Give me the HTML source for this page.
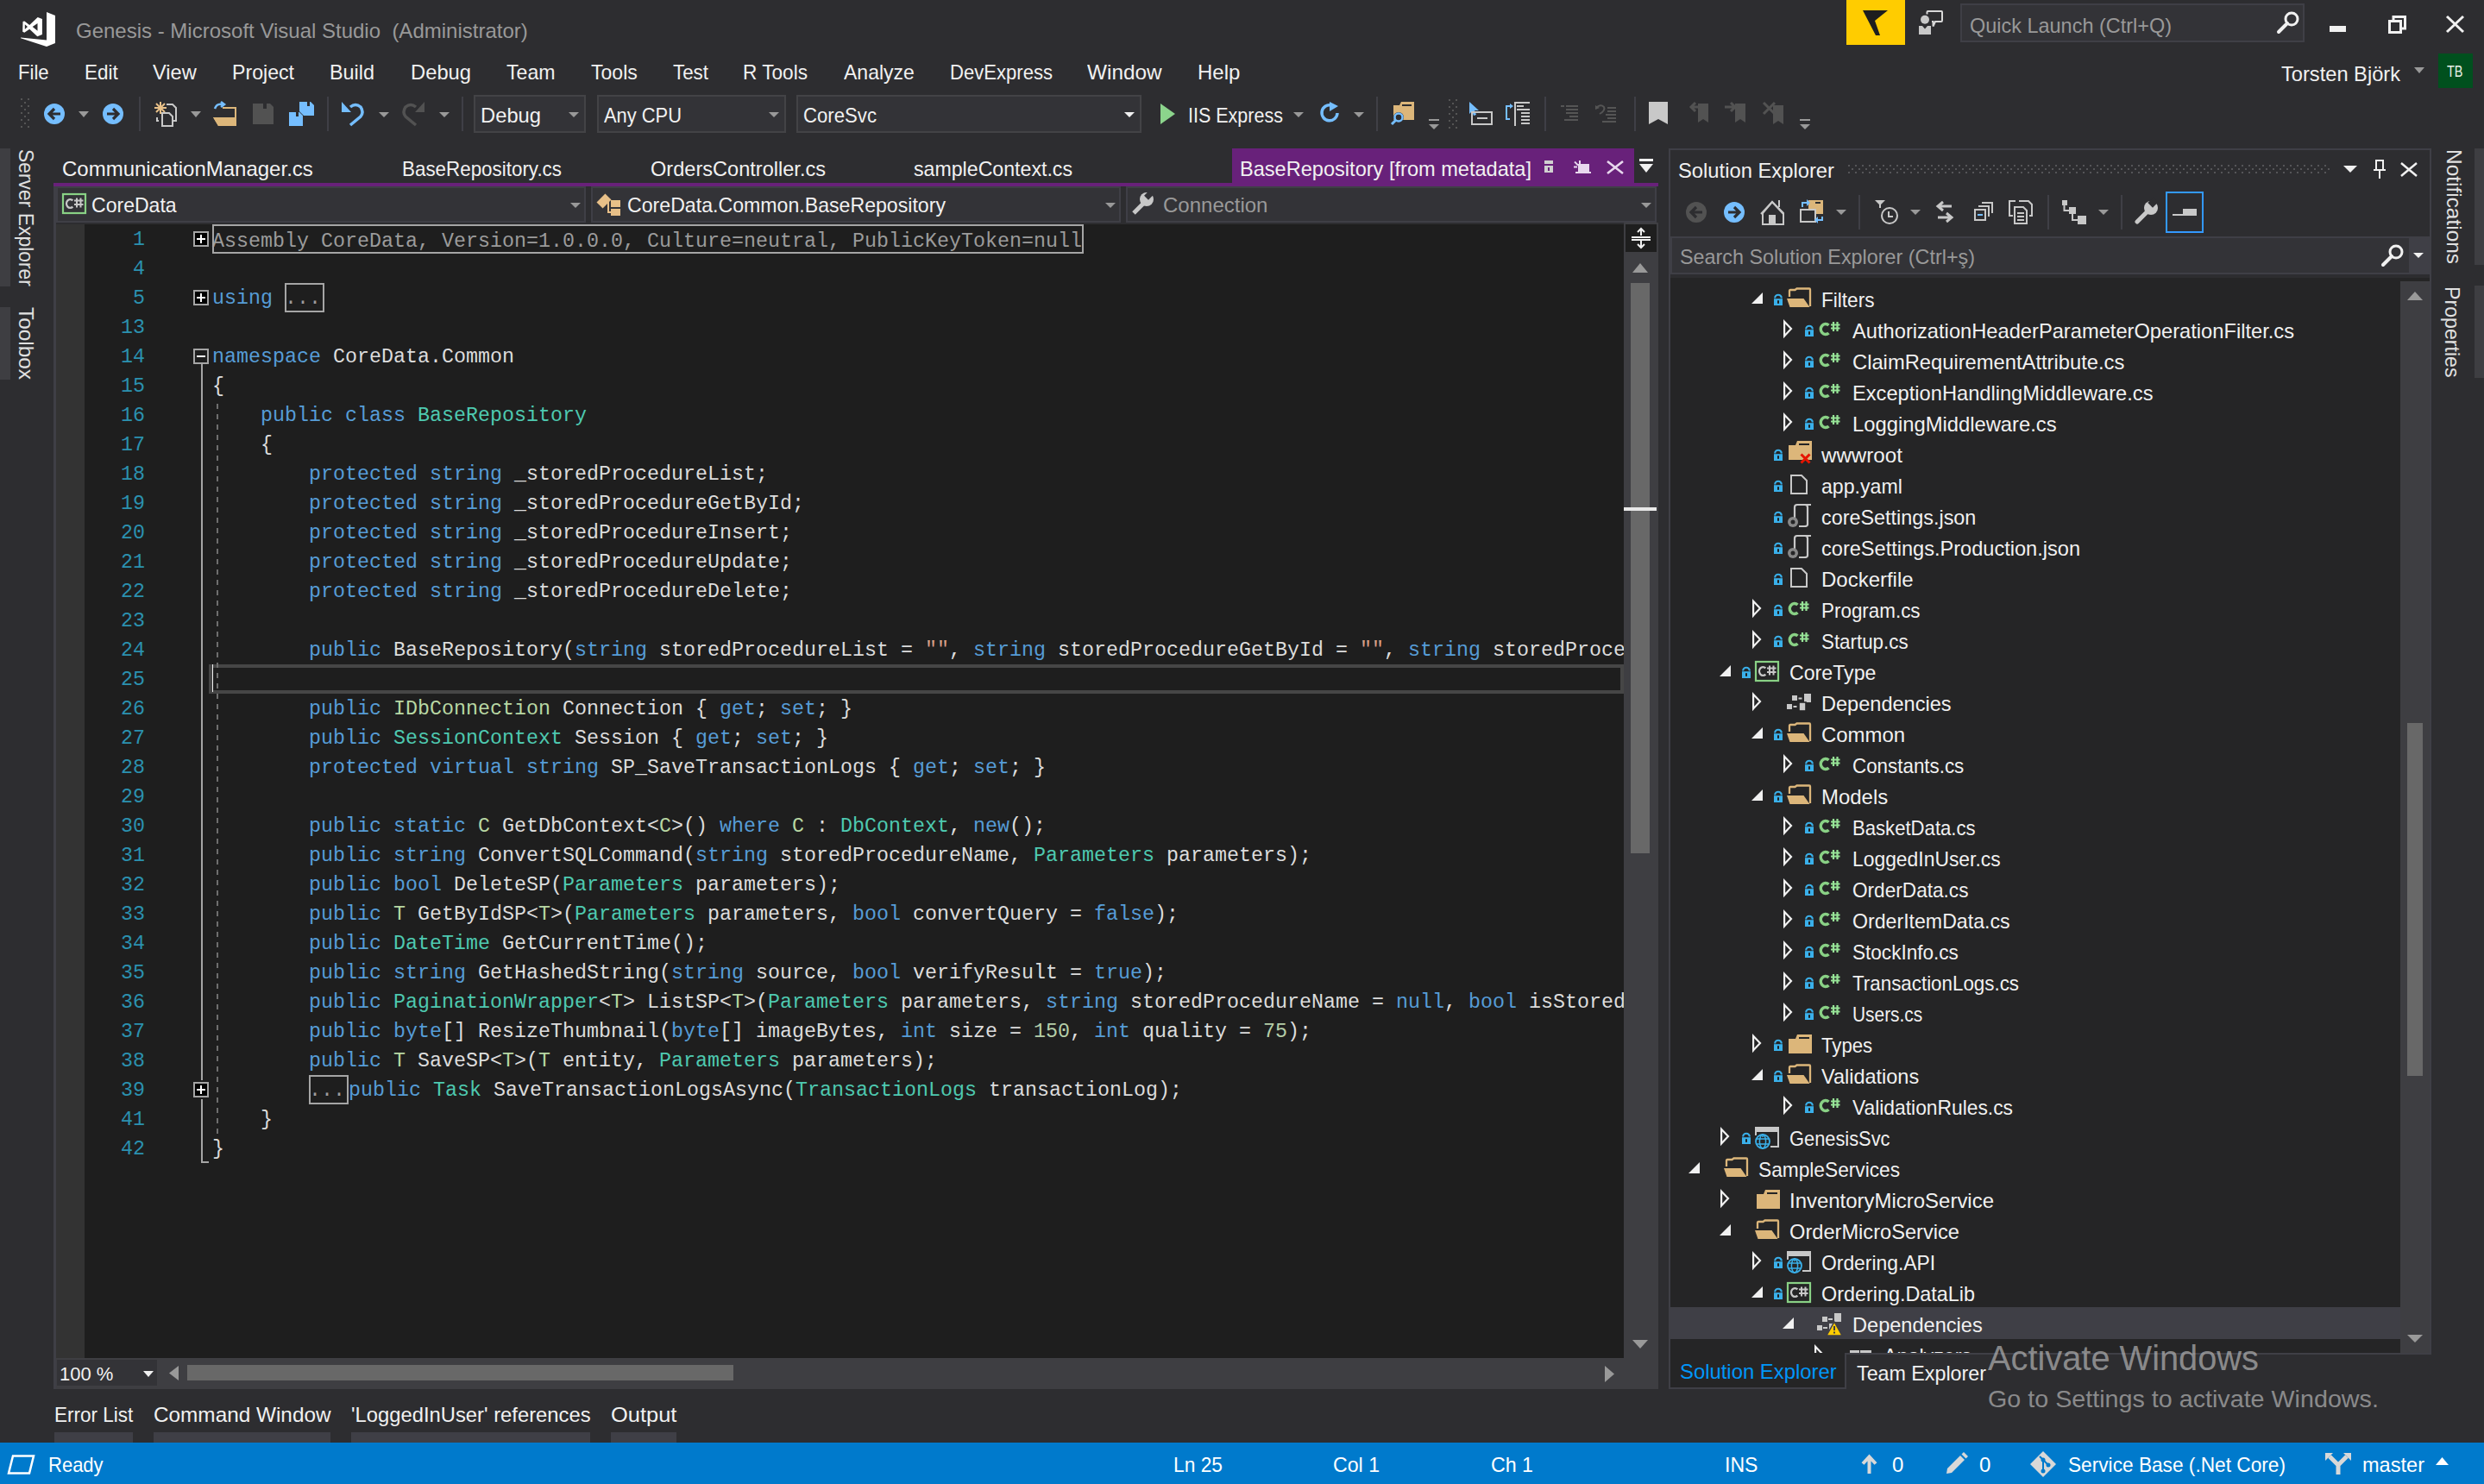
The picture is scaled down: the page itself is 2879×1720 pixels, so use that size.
<!DOCTYPE html><html><head><meta charset="utf-8"><title>VS</title><style>
*{margin:0;padding:0;box-sizing:border-box}
html,body{width:2879px;height:1720px;overflow:hidden;background:#2d2d30;font-family:"Liberation Sans",sans-serif;color:#f1f1f1;position:relative}
.a{position:absolute}
.t{position:absolute;white-space:pre;line-height:normal}
.mono{font-family:"Liberation Mono",monospace}
svg{overflow:visible}
</style></head><body>
<svg class="a" style="left:24px;top:14px" width="40" height="40" viewBox="0 0 40 40"><polygon points="30,0 40,4 40,36 30,40 0,30.3 0,29.5 30,32.4" fill="#ffffff"/><path fill-rule="evenodd" d="M2.5 11 L4.3 10.4 L10.2 15 L19.7 5.9 L24.9 8 V26.1 L19.3 28.3 L10.2 19.8 L4.3 23.8 L2.2 22.7 Z M4.8 14.2 L8 17.1 L4.8 20.1 Z M19.5 12.9 L13.7 17.1 L19.5 21.7 Z" fill="#ffffff"/></svg>
<div class="t" style="left:88px;top:22.28px;font-size:24px;color:#999999;">Genesis - Microsoft Visual Studio  (Administrator)</div>
<div class="a" style="left:2140px;top:0px;width:68px;height:52px;background:#ffcc00;"></div>
<svg class="a" style="left:2159px;top:12px" width="29" height="29" viewBox="0 0 29 29"><polygon points="0,0 29,0 14,12 20,29 15,29" fill="#1e1e1e"/></svg>
<svg class="a" style="left:2224px;top:11px" width="29" height="30" viewBox="0 0 29 30"><path d="M9.5 5.5 V3 Q9.5 2 10.5 2 H26 Q27 2 27 3 V12.5 Q27 14 26 14 H19 L16.5 19.5 V14 H15" fill="none" stroke="#d8d8d8" stroke-width="2"/><circle cx="7" cy="11.8" r="5" fill="#c8c8c8"/><polygon points="0,19 4,19 7,22.5 10,19 14,19 14,29 0,29" fill="#c8c8c8"/></svg>
<div class="a" style="left:2272px;top:4px;width:399px;height:45px;background:#333337;border:2px solid #3f3f46;"></div>
<div class="t" style="left:2283px;top:16.28px;font-size:24px;color:#999999;transform-origin:0 0;transform:scaleX(0.9774);">Quick Launch (Ctrl+Q)</div>
<svg class="a" style="left:2639px;top:13px" width="26" height="26" viewBox="0 0 26 26"><circle cx="17" cy="9" r="7" fill="none" stroke="#f1f1f1" stroke-width="3"/><line x1="12" y1="14" x2="2" y2="24" stroke="#f1f1f1" stroke-width="4" stroke-linecap="round"/></svg>
<div class="a" style="left:2700px;top:30px;width:19px;height:7px;background:#f1f1f1;"></div>
<svg class="a" style="left:2768px;top:18px" width="21" height="21" viewBox="0 0 21 21"><rect x="1.5" y="6.5" width="13" height="13" fill="none" stroke="#f1f1f1" stroke-width="3"/><path d="M6 6 V1.5 H19.5 V15 H15" fill="none" stroke="#f1f1f1" stroke-width="3"/></svg>
<svg class="a" style="left:2835px;top:19px" width="21" height="18" viewBox="0 0 21 18"><path d="M1 0 L20 18 M20 0 L1 18" stroke="#f1f1f1" stroke-width="3"/></svg>
<div class="t" style="left:21px;top:70.28px;font-size:24px;color:#f1f1f1;transform-origin:0 0;transform:scaleX(0.9209);">File</div>
<div class="t" style="left:98px;top:70.28px;font-size:24px;color:#f1f1f1;transform-origin:0 0;transform:scaleX(0.9381);">Edit</div>
<div class="t" style="left:177.4px;top:70.28px;font-size:24px;color:#f1f1f1;transform-origin:0 0;transform:scaleX(0.9830);">View</div>
<div class="t" style="left:269px;top:70.28px;font-size:24px;color:#f1f1f1;transform-origin:0 0;transform:scaleX(0.9638);">Project</div>
<div class="t" style="left:382px;top:70.28px;font-size:24px;color:#f1f1f1;transform-origin:0 0;transform:scaleX(0.9745);">Build</div>
<div class="t" style="left:476px;top:70.28px;font-size:24px;color:#f1f1f1;transform-origin:0 0;transform:scaleX(0.9901);">Debug</div>
<div class="t" style="left:587px;top:70.28px;font-size:24px;color:#f1f1f1;transform-origin:0 0;transform:scaleX(0.9627);">Team</div>
<div class="t" style="left:684.5px;top:70.28px;font-size:24px;color:#f1f1f1;transform-origin:0 0;transform:scaleX(0.9604);">Tools</div>
<div class="t" style="left:780px;top:70.28px;font-size:24px;color:#f1f1f1;transform-origin:0 0;transform:scaleX(0.9315);">Test</div>
<div class="t" style="left:861px;top:70.28px;font-size:24px;color:#f1f1f1;transform-origin:0 0;transform:scaleX(0.9425);">R Tools</div>
<div class="t" style="left:977.6px;top:70.28px;font-size:24px;color:#f1f1f1;transform-origin:0 0;transform:scaleX(0.9581);">Analyze</div>
<div class="t" style="left:1100.6px;top:70.28px;font-size:24px;color:#f1f1f1;transform-origin:0 0;transform:scaleX(0.9198);">DevExpress</div>
<div class="t" style="left:1260px;top:70.28px;font-size:24px;color:#f1f1f1;transform-origin:0 0;transform:scaleX(1.0159);">Window</div>
<div class="t" style="left:1387.6px;top:70.28px;font-size:24px;color:#f1f1f1;transform-origin:0 0;transform:scaleX(0.9991);">Help</div>
<div class="t" style="left:2644px;top:72.28px;font-size:24px;color:#f1f1f1;transform-origin:0 0;transform:scaleX(0.9853);">Torsten Björk</div>
<svg class="a" style="left:2798px;top:78px" width="12" height="7" viewBox="0 0 12 7"><polygon points="0,0 12,0 6.0,7" fill="#999999"/></svg>
<div class="a" style="left:2826px;top:62px;width:40px;height:40px;background:#00501e;"></div>
<div class="t" style="left:2836px;top:73.16px;font-size:17.5px;color:#e8f0e8;transform-origin:0 0;transform:scaleX(0.8274);">TB</div>
<svg class="a" style="left:24px;top:114px" width="10" height="34" viewBox="0 0 10 34"><rect x="0" y="0" width="2" height="2" fill="#555"/><rect x="8" y="0" width="2" height="2" fill="#555"/><rect x="4" y="4" width="2" height="2" fill="#555"/><rect x="0" y="8" width="2" height="2" fill="#555"/><rect x="8" y="8" width="2" height="2" fill="#555"/><rect x="4" y="12" width="2" height="2" fill="#555"/><rect x="0" y="16" width="2" height="2" fill="#555"/><rect x="8" y="16" width="2" height="2" fill="#555"/><rect x="4" y="20" width="2" height="2" fill="#555"/><rect x="0" y="24" width="2" height="2" fill="#555"/><rect x="8" y="24" width="2" height="2" fill="#555"/><rect x="4" y="28" width="2" height="2" fill="#555"/><rect x="0" y="32" width="2" height="2" fill="#555"/><rect x="8" y="32" width="2" height="2" fill="#555"/></svg>
<svg class="a" style="left:51px;top:120px" width="24" height="24" viewBox="0 0 24 24"><circle cx="12" cy="12" r="12" fill="#75beff"/><path d="M19 12 H7 M12 6 L6 12 L12 18" fill="none" stroke="#2d2d30" stroke-width="3.2"/></svg>
<svg class="a" style="left:91px;top:129px" width="12" height="7" viewBox="0 0 12 7"><polygon points="0,0 12,0 6.0,7" fill="#999999"/></svg>
<svg class="a" style="left:119px;top:120px" width="24" height="24" viewBox="0 0 24 24"><circle cx="12" cy="12" r="12" fill="#75beff"/><path d="M5 12 H17 M12 6 L18 12 L12 18" fill="none" stroke="#2d2d30" stroke-width="3.2"/></svg>
<div class="a" style="left:161px;top:112px;width:2px;height:40px;background:#3f3f46;"></div>
<svg class="a" style="left:179px;top:118px" width="27" height="28" viewBox="0 0 27 28"><g stroke="#e8c088" stroke-width="2"><path d="M7 0 V14 M0 7 H14 M2 2 L12 12 M12 2 L2 12"/></g><path d="M14 3 H21 L25 7 V22 H21" fill="none" stroke="#c8c8c8" stroke-width="2"/><path d="M3 18 V22 H5" fill="none" stroke="#c8c8c8" stroke-width="2"/><path d="M9 13 H17 L21 17 V28 H9 Z" fill="#2d2d30" stroke="#c8c8c8" stroke-width="2"/></svg>
<svg class="a" style="left:221px;top:129px" width="12" height="7" viewBox="0 0 12 7"><polygon points="0,0 12,0 6.0,7" fill="#999999"/></svg>
<svg class="a" style="left:247px;top:118px" width="29" height="28" viewBox="0 0 29 28"><path d="M2 8 Q4 2 10 3 L12 3" fill="none" stroke="#75beff" stroke-width="2.5"/><path d="M9 0 L13 3 L9 6" fill="none" stroke="#75beff" stroke-width="2.5"/><path d="M11 6 H27 V28 H6 L0 18 H11 Z" fill="#dcb67a"/><path d="M13 7 H26 V20" fill="none" stroke="#dcb67a" stroke-width="2"/><rect x="10" y="8" width="15" height="10" fill="#2d2d30"/><path d="M0 18 H22 L27 28 H6 Z" fill="#dcb67a"/></svg>
<svg class="a" style="left:293px;top:120px" width="24" height="24" viewBox="0 0 24 24"><path d="M0 0 H20 L24 4 V24 H0 Z" fill="#525252"/><rect x="12" y="0" width="4" height="6" fill="#2d2d30"/></svg>
<svg class="a" style="left:335px;top:118px" width="29" height="28" viewBox="0 0 29 28"><path d="M12 0 H25 L29 4 V16 H17 L12 11 Z" fill="#75beff"/><rect x="21" y="0" width="3" height="5" fill="#2d2d30"/><path d="M0 12 H12 L16 16 V28 H0 Z" fill="#75beff"/><rect x="8" y="12" width="3" height="5" fill="#2d2d30"/></svg>
<div class="a" style="left:379px;top:112px;width:2px;height:40px;background:#3f3f46;"></div>
<svg class="a" style="left:396px;top:118px" width="26" height="28" viewBox="0 0 26 28"><path d="M10 6 Q16 1 22 6 Q26 12 22 17 L10 27" fill="none" stroke="#75beff" stroke-width="3.5"/><polygon points="0,0 0,12 11,12" fill="#75beff"/></svg>
<svg class="a" style="left:439px;top:130px" width="12" height="6" viewBox="0 0 12 6"><polygon points="0,0 12,0 6.0,6" fill="#999999"/></svg>
<svg class="a" style="left:466px;top:118px" width="26" height="28" viewBox="0 0 26 28"><path d="M16 6 Q10 1 4 6 Q0 12 4 17 L16 27" fill="none" stroke="#525252" stroke-width="3.5"/><polygon points="26,0 26,12 15,12" fill="#525252"/></svg>
<svg class="a" style="left:509px;top:130px" width="12" height="6" viewBox="0 0 12 6"><polygon points="0,0 12,0 6.0,6" fill="#999999"/></svg>
<div class="a" style="left:535px;top:112px;width:2px;height:40px;background:#3f3f46;"></div>
<div class="a" style="left:549px;top:110px;width:130px;height:44px;background:#333337;border:2px solid #434346;"></div>
<div class="t" style="left:557px;top:120.28px;font-size:24px;color:#f1f1f1;transform-origin:0 0;transform:scaleX(0.9901);">Debug</div>
<svg class="a" style="left:659px;top:130px" width="12" height="6" viewBox="0 0 12 6"><polygon points="0,0 12,0 6.0,6" fill="#999999"/></svg>
<div class="a" style="left:692px;top:110px;width:219px;height:44px;background:#333337;border:2px solid #434346;"></div>
<div class="t" style="left:700px;top:120.28px;font-size:24px;color:#f1f1f1;transform-origin:0 0;transform:scaleX(0.9118);">Any CPU</div>
<svg class="a" style="left:891px;top:130px" width="12" height="6" viewBox="0 0 12 6"><polygon points="0,0 12,0 6.0,6" fill="#999999"/></svg>
<div class="a" style="left:923px;top:110px;width:400px;height:44px;background:#333337;border:2px solid #434346;"></div>
<div class="t" style="left:931px;top:120.28px;font-size:24px;color:#f1f1f1;transform-origin:0 0;transform:scaleX(0.9236);">CoreSvc</div>
<svg class="a" style="left:1303px;top:130px" width="12" height="6" viewBox="0 0 12 6"><polygon points="0,0 12,0 6.0,6" fill="#f1f1f1"/></svg>
<svg class="a" style="left:1344.5px;top:120px" width="18" height="24" viewBox="0 0 18 24"><polygon points="0,0 17,12 0,24" fill="#8cd48c"/></svg>
<div class="t" style="left:1377px;top:120.28px;font-size:24px;color:#f1f1f1;transform-origin:0 0;transform:scaleX(0.8962);">IIS Express</div>
<svg class="a" style="left:1499px;top:130px" width="12" height="6" viewBox="0 0 12 6"><polygon points="0,0 12,0 6.0,6" fill="#999999"/></svg>
<svg class="a" style="left:1529px;top:118px" width="26" height="27" viewBox="0 0 26 27"><path d="M21 13 A9 9 0 1 1 14 4" fill="none" stroke="#75beff" stroke-width="3.5"/><polygon points="12,0 22,5 12,11" fill="#75beff"/></svg>
<svg class="a" style="left:1569px;top:130px" width="12" height="6" viewBox="0 0 12 6"><polygon points="0,0 12,0 6.0,6" fill="#999999"/></svg>
<div class="a" style="left:1595px;top:112px;width:2px;height:40px;background:#3f3f46;"></div>
<svg class="a" style="left:1612px;top:117px" width="28" height="28" viewBox="0 0 28 28"><path d="M3 5 H10 L12 1 H27 V22 H3 Z" fill="#dcb67a"/><rect x="13" y="4" width="11" height="2" fill="#2d2d30"/><circle cx="9" cy="19" r="6" fill="#2d2d30"/><circle cx="9" cy="19" r="4.5" fill="none" stroke="#75beff" stroke-width="2.5"/><line x1="5.5" y1="22.5" x2="1" y2="27" stroke="#75beff" stroke-width="3"/></svg>
<div class="a" style="left:1656px;top:138px;width:12px;height:2px;background:#999999;"></div>
<svg class="a" style="left:1656px;top:144px" width="12" height="6" viewBox="0 0 12 6"><polygon points="0,0 12,0 6.0,6" fill="#999999"/></svg>
<svg class="a" style="left:1679px;top:115px" width="10" height="32" viewBox="0 0 10 32"><rect x="0" y="0" width="2" height="2" fill="#555"/><rect x="8" y="0" width="2" height="2" fill="#555"/><rect x="4" y="4" width="2" height="2" fill="#555"/><rect x="0" y="8" width="2" height="2" fill="#555"/><rect x="8" y="8" width="2" height="2" fill="#555"/><rect x="4" y="12" width="2" height="2" fill="#555"/><rect x="0" y="16" width="2" height="2" fill="#555"/><rect x="8" y="16" width="2" height="2" fill="#555"/><rect x="4" y="20" width="2" height="2" fill="#555"/><rect x="0" y="24" width="2" height="2" fill="#555"/><rect x="8" y="24" width="2" height="2" fill="#555"/><rect x="4" y="28" width="2" height="2" fill="#555"/><rect x="0" y="32" width="2" height="2" fill="#555"/><rect x="8" y="32" width="2" height="2" fill="#555"/></svg>
<svg class="a" style="left:1703px;top:118px" width="27" height="27" viewBox="0 0 27 27"><polygon points="0,0 11,10 6,10 8,15 5,16 3,11 0,14" fill="#75beff"/><rect x="3" y="12" width="23" height="14" fill="none" stroke="#c8c8c8" stroke-width="2"/><rect x="9" y="18" width="12" height="2" fill="#c8c8c8"/></svg>
<svg class="a" style="left:1745px;top:118px" width="28" height="28" viewBox="0 0 28 28"><path d="M5 5 H1 V20 H5" fill="none" stroke="#75beff" stroke-width="2"/><polygon points="5,2 9,5 5,8" fill="#75beff"/><rect x="10" y="0" width="2" height="28" fill="#c8c8c8"/><rect x="10" y="0" width="18" height="2" fill="#c8c8c8"/><rect x="13" y="4" width="8" height="2" fill="#c8c8c8"/><rect x="13" y="8" width="15" height="2" fill="#c8c8c8"/><rect x="18" y="12" width="10" height="2" fill="#c8c8c8"/><rect x="18" y="16" width="10" height="2" fill="#c8c8c8"/><rect x="18" y="20" width="10" height="2" fill="#c8c8c8"/><rect x="18" y="24" width="10" height="2" fill="#c8c8c8"/></svg>
<div class="a" style="left:1790px;top:112px;width:2px;height:40px;background:#3f3f46;"></div>
<svg class="a" style="left:1809px;top:122px" width="20" height="18" viewBox="0 0 20 18"><rect x="0" y="0" width="4" height="2" fill="#555"/><rect x="6" y="0" width="14" height="2" fill="#555"/><rect x="6" y="4" width="14" height="2" fill="#555"/><rect x="6" y="8" width="14" height="2" fill="#555"/><rect x="10" y="12" width="10" height="2" fill="#555"/><rect x="4" y="16" width="16" height="2" fill="#555"/></svg>
<svg class="a" style="left:1849px;top:120px" width="24" height="22" viewBox="0 0 24 22"><path d="M1 5 Q6 0 10 4 Q12 8 5 12" fill="none" stroke="#555" stroke-width="2"/><polygon points="0,2 5,5 0,7" fill="#555"/><rect x="14" y="4" width="10" height="2" fill="#555"/><rect x="14" y="8" width="10" height="2" fill="#555"/><rect x="12" y="12" width="12" height="2" fill="#555"/><rect x="14" y="16" width="10" height="2" fill="#555"/><rect x="8" y="20" width="16" height="2" fill="#555"/></svg>
<div class="a" style="left:1894px;top:112px;width:2px;height:40px;background:#3f3f46;"></div>
<svg class="a" style="left:1911px;top:118px" width="22" height="26" viewBox="0 0 22 26"><polygon points="0,0 22,0 22,26 11,20 0,26" fill="#c8c8c8"/></svg>
<svg class="a" style="left:1957px;top:118px" width="23" height="24" viewBox="0 0 23 24"><polygon points="11,2 23,2 23,24 17,20 11,24" fill="#525252"/><path d="M14 6 H3 M8 1 L3 6 L8 11" fill="none" stroke="#525252" stroke-width="3"/></svg>
<svg class="a" style="left:1999px;top:118px" width="24" height="24" viewBox="0 0 24 24"><polygon points="12,2 24,2 24,24 18,20 12,24" fill="#525252"/><path d="M0 6 H12 M7 1 L12 6 L7 11" fill="none" stroke="#525252" stroke-width="3"/></svg>
<svg class="a" style="left:2043px;top:118px" width="24" height="26" viewBox="0 0 24 26"><polygon points="12,4 24,4 24,26 18,22 12,26" fill="#525252"/><path d="M1 14 L14 1 M1 1 L14 14" fill="none" stroke="#525252" stroke-width="3"/></svg>
<div class="a" style="left:2086px;top:138px;width:12px;height:2px;background:#999999;"></div>
<svg class="a" style="left:2086px;top:144px" width="12" height="6" viewBox="0 0 12 6"><polygon points="0,0 12,0 6.0,6" fill="#999999"/></svg>
<div class="a" style="left:0px;top:172px;width:12px;height:160px;background:#3e3e42;"></div>
<div class="a" style="left:0px;top:356px;width:12px;height:84px;background:#3e3e42;"></div>
<div class="t" style="left:30px;top:173px;font-size:24px;color:#e0e0e0;transform-origin:0 0;transform:rotate(90deg) translate(0,-50%) scaleX(0.9535);line-height:28px">Server Explorer</div>
<div class="t" style="left:30px;top:356px;font-size:24px;color:#e0e0e0;transform-origin:0 0;transform:rotate(90deg) translate(0,-50%) scaleX(1.0157);line-height:28px">Toolbox</div>
<div class="t" style="left:72px;top:182.28px;font-size:24px;color:#f1f1f1;">CommunicationManager.cs</div>
<div class="t" style="left:466px;top:182.28px;font-size:24px;color:#f1f1f1;transform-origin:0 0;transform:scaleX(0.9329);">BaseRepository.cs</div>
<div class="t" style="left:754px;top:182.28px;font-size:24px;color:#f1f1f1;transform-origin:0 0;transform:scaleX(0.9819);">OrdersController.cs</div>
<div class="t" style="left:1059px;top:182.28px;font-size:24px;color:#f1f1f1;transform-origin:0 0;transform:scaleX(0.9647);">sampleContext.cs</div>
<div class="a" style="left:1428px;top:172px;width:466px;height:44px;background:#68217a;"></div>
<div class="t" style="left:1437px;top:182.28px;font-size:24px;color:#f1f1f1;transform-origin:0 0;transform:scaleX(0.9821);">BaseRepository [from metadata]</div>
<svg class="a" style="left:1790px;top:186px" width="10" height="14" viewBox="0 0 10 14"><rect x="0" y="0" width="10" height="4" fill="#d0d0d0"/><rect x="0" y="6" width="10" height="8" fill="#d0d0d0"/><rect x="4" y="8" width="2" height="4" fill="#68217a"/></svg>
<svg class="a" style="left:1824px;top:186px" width="20" height="15" viewBox="0 0 20 15"><path d="M1 1.5 L5 5.5" stroke="#e8d8ee" stroke-width="1.8"/><rect x="6" y="0" width="2" height="4" fill="#e8d8ee"/><rect x="0" y="6.5" width="4" height="2" fill="#e8d8ee"/><polygon points="5,4 18,4 18,13 5,13" fill="#e8d8ee"/><rect x="2" y="13" width="18" height="2" fill="#e8d8ee"/></svg>
<svg class="a" style="left:1862px;top:186px" width="20" height="16" viewBox="0 0 20 16"><path d="M1 1 L19 15 M19 1 L1 15" stroke="#e8d8ee" stroke-width="2.6"/></svg>
<svg class="a" style="left:1900px;top:184px" width="16" height="16" viewBox="0 0 16 16"><rect x="0" y="0" width="16" height="3" fill="#f1f1f1"/><polygon points="0,6 16,6 8,16" fill="#f1f1f1"/></svg>
<div class="a" style="left:62px;top:212px;width:1860px;height:4px;background:#68217a;"></div>
<div class="a" style="left:65px;top:216px;width:614px;height:42px;background:#333337;border:2px solid #3f3f46;"></div>
<svg class="a" style="left:661px;top:235px" width="12" height="6" viewBox="0 0 12 6"><polygon points="0,0 12,0 6.0,6" fill="#999999"/></svg>
<div class="a" style="left:685px;top:216px;width:614px;height:42px;background:#333337;border:2px solid #3f3f46;"></div>
<svg class="a" style="left:1281px;top:235px" width="12" height="6" viewBox="0 0 12 6"><polygon points="0,0 12,0 6.0,6" fill="#999999"/></svg>
<div class="a" style="left:1305px;top:216px;width:615px;height:42px;background:#333337;border:2px solid #3f3f46;"></div>
<svg class="a" style="left:1902px;top:235px" width="12" height="6" viewBox="0 0 12 6"><polygon points="0,0 12,0 6.0,6" fill="#999999"/></svg>
<svg class="a" style="left:72px;top:224px" width="28" height="24" viewBox="0 0 28 24"><rect x="1" y="1" width="26" height="22" fill="none" stroke="#89d185" stroke-width="2.2"/><path d="M12.3 8.4 A4.3 4.9 0 1 0 12.3 15.6" fill="none" stroke="#c8c8c8" stroke-width="2.4"/><path d="M17 5.5 V16.5 M21.5 5.5 V16.5 M14 8.5 H24.5 M14 13 H24.5" stroke="#c8c8c8" stroke-width="2"/></svg>
<div class="t" style="left:106px;top:224.28px;font-size:24px;color:#f1f1f1;transform-origin:0 0;transform:scaleX(0.9600);">CoreData</div>
<svg class="a" style="left:693px;top:222px" width="28" height="28" viewBox="0 0 28 28"><g fill="#e8c088"><rect x="0" y="6" width="14" height="10" transform="rotate(-45 7 11)"/><rect x="15" y="10" width="11" height="8"/><rect x="15" y="20" width="11" height="8"/></g><path d="M12 11 V24 H17" fill="none" stroke="#e8c088" stroke-width="2"/></svg>
<div class="t" style="left:727px;top:224.28px;font-size:24px;color:#f1f1f1;transform-origin:0 0;transform:scaleX(0.9639);">CoreData.Common.BaseRepository</div>
<svg class="a" style="left:1311px;top:222px" width="28" height="28" viewBox="0 0 28 28"><path d="M3 25 L14 14" stroke="#c8c8c8" stroke-width="5"/><circle cx="18" cy="9" r="8" fill="#c8c8c8"/><rect x="17" y="0" width="7" height="8" fill="#333337" transform="rotate(45 20 4)"/></svg>
<div class="t" style="left:1348px;top:224.28px;font-size:24px;color:#999999;">Connection</div>
<div class="a" style="left:62px;top:216px;width:3px;height:1394px;background:#3f3f46;"></div>
<div class="a" style="left:65px;top:260px;width:33px;height:1314px;background:#333333;"></div>
<div class="a" style="left:98px;top:260px;width:1784px;height:1314px;background:#1e1e1e;"></div>
<div class="a" style="left:98px;top:258px;width:1784px;height:1316px;overflow:hidden">
<div class="t mono" style="left:0px;width:70px;text-align:right;top:3px;font-size:23.33px;line-height:34px;color:#2b91af">1</div>
<div class="t mono" style="left:0px;width:70px;text-align:right;top:37px;font-size:23.33px;line-height:34px;color:#2b91af">4</div>
<div class="t mono" style="left:148px;top:37px;font-size:23.33px;line-height:34px;color:#dcdcdc"></div>
<div class="t mono" style="left:0px;width:70px;text-align:right;top:71px;font-size:23.33px;line-height:34px;color:#2b91af">5</div>
<div class="t mono" style="left:0px;width:70px;text-align:right;top:105px;font-size:23.33px;line-height:34px;color:#2b91af">13</div>
<div class="t mono" style="left:148px;top:105px;font-size:23.33px;line-height:34px;color:#dcdcdc"></div>
<div class="t mono" style="left:0px;width:70px;text-align:right;top:139px;font-size:23.33px;line-height:34px;color:#2b91af">14</div>
<div class="t mono" style="left:148px;top:139px;font-size:23.33px;line-height:34px;color:#dcdcdc"><span style="color:#569cd6">namespace</span> CoreData.Common</div>
<div class="t mono" style="left:0px;width:70px;text-align:right;top:173px;font-size:23.33px;line-height:34px;color:#2b91af">15</div>
<div class="t mono" style="left:148px;top:173px;font-size:23.33px;line-height:34px;color:#dcdcdc">{</div>
<div class="t mono" style="left:0px;width:70px;text-align:right;top:207px;font-size:23.33px;line-height:34px;color:#2b91af">16</div>
<div class="t mono" style="left:148px;top:207px;font-size:23.33px;line-height:34px;color:#dcdcdc">    <span style="color:#569cd6">public</span> <span style="color:#569cd6">class</span> <span style="color:#4ec9b0">BaseRepository</span></div>
<div class="t mono" style="left:0px;width:70px;text-align:right;top:241px;font-size:23.33px;line-height:34px;color:#2b91af">17</div>
<div class="t mono" style="left:148px;top:241px;font-size:23.33px;line-height:34px;color:#dcdcdc">    {</div>
<div class="t mono" style="left:0px;width:70px;text-align:right;top:275px;font-size:23.33px;line-height:34px;color:#2b91af">18</div>
<div class="t mono" style="left:148px;top:275px;font-size:23.33px;line-height:34px;color:#dcdcdc">        <span style="color:#569cd6">protected</span> <span style="color:#569cd6">string</span> _storedProcedureList;</div>
<div class="t mono" style="left:0px;width:70px;text-align:right;top:309px;font-size:23.33px;line-height:34px;color:#2b91af">19</div>
<div class="t mono" style="left:148px;top:309px;font-size:23.33px;line-height:34px;color:#dcdcdc">        <span style="color:#569cd6">protected</span> <span style="color:#569cd6">string</span> _storedProcedureGetById;</div>
<div class="t mono" style="left:0px;width:70px;text-align:right;top:343px;font-size:23.33px;line-height:34px;color:#2b91af">20</div>
<div class="t mono" style="left:148px;top:343px;font-size:23.33px;line-height:34px;color:#dcdcdc">        <span style="color:#569cd6">protected</span> <span style="color:#569cd6">string</span> _storedProcedureInsert;</div>
<div class="t mono" style="left:0px;width:70px;text-align:right;top:377px;font-size:23.33px;line-height:34px;color:#2b91af">21</div>
<div class="t mono" style="left:148px;top:377px;font-size:23.33px;line-height:34px;color:#dcdcdc">        <span style="color:#569cd6">protected</span> <span style="color:#569cd6">string</span> _storedProcedureUpdate;</div>
<div class="t mono" style="left:0px;width:70px;text-align:right;top:411px;font-size:23.33px;line-height:34px;color:#2b91af">22</div>
<div class="t mono" style="left:148px;top:411px;font-size:23.33px;line-height:34px;color:#dcdcdc">        <span style="color:#569cd6">protected</span> <span style="color:#569cd6">string</span> _storedProcedureDelete;</div>
<div class="t mono" style="left:0px;width:70px;text-align:right;top:445px;font-size:23.33px;line-height:34px;color:#2b91af">23</div>
<div class="t mono" style="left:148px;top:445px;font-size:23.33px;line-height:34px;color:#dcdcdc"></div>
<div class="t mono" style="left:0px;width:70px;text-align:right;top:479px;font-size:23.33px;line-height:34px;color:#2b91af">24</div>
<div class="t mono" style="left:148px;top:479px;font-size:23.33px;line-height:34px;color:#dcdcdc">        <span style="color:#569cd6">public</span> <span style="color:#dcdcdc">BaseRepository</span>(<span style="color:#569cd6">string</span> storedProcedureList = <span style="color:#d69d85">""</span>, <span style="color:#569cd6">string</span> storedProcedureGetById = <span style="color:#d69d85">""</span>, <span style="color:#569cd6">string</span> storedProcedureInsert</div>
<div class="t mono" style="left:0px;width:70px;text-align:right;top:513px;font-size:23.33px;line-height:34px;color:#2b91af">25</div>
<div class="t mono" style="left:148px;top:513px;font-size:23.33px;line-height:34px;color:#dcdcdc"></div>
<div class="t mono" style="left:0px;width:70px;text-align:right;top:547px;font-size:23.33px;line-height:34px;color:#2b91af">26</div>
<div class="t mono" style="left:148px;top:547px;font-size:23.33px;line-height:34px;color:#dcdcdc">        <span style="color:#569cd6">public</span> <span style="color:#b8d7a3">IDbConnection</span> Connection { <span style="color:#569cd6">get</span>; <span style="color:#569cd6">set</span>; }</div>
<div class="t mono" style="left:0px;width:70px;text-align:right;top:581px;font-size:23.33px;line-height:34px;color:#2b91af">27</div>
<div class="t mono" style="left:148px;top:581px;font-size:23.33px;line-height:34px;color:#dcdcdc">        <span style="color:#569cd6">public</span> <span style="color:#4ec9b0">SessionContext</span> Session { <span style="color:#569cd6">get</span>; <span style="color:#569cd6">set</span>; }</div>
<div class="t mono" style="left:0px;width:70px;text-align:right;top:615px;font-size:23.33px;line-height:34px;color:#2b91af">28</div>
<div class="t mono" style="left:148px;top:615px;font-size:23.33px;line-height:34px;color:#dcdcdc">        <span style="color:#569cd6">protected</span> <span style="color:#569cd6">virtual</span> <span style="color:#569cd6">string</span> SP_SaveTransactionLogs { <span style="color:#569cd6">get</span>; <span style="color:#569cd6">set</span>; }</div>
<div class="t mono" style="left:0px;width:70px;text-align:right;top:649px;font-size:23.33px;line-height:34px;color:#2b91af">29</div>
<div class="t mono" style="left:148px;top:649px;font-size:23.33px;line-height:34px;color:#dcdcdc"></div>
<div class="t mono" style="left:0px;width:70px;text-align:right;top:683px;font-size:23.33px;line-height:34px;color:#2b91af">30</div>
<div class="t mono" style="left:148px;top:683px;font-size:23.33px;line-height:34px;color:#dcdcdc">        <span style="color:#569cd6">public</span> <span style="color:#569cd6">static</span> <span style="color:#b8d7a3">C</span> GetDbContext&lt;<span style="color:#b8d7a3">C</span>&gt;() <span style="color:#569cd6">where</span> <span style="color:#b8d7a3">C</span> : <span style="color:#4ec9b0">DbContext</span>, <span style="color:#569cd6">new</span>();</div>
<div class="t mono" style="left:0px;width:70px;text-align:right;top:717px;font-size:23.33px;line-height:34px;color:#2b91af">31</div>
<div class="t mono" style="left:148px;top:717px;font-size:23.33px;line-height:34px;color:#dcdcdc">        <span style="color:#569cd6">public</span> <span style="color:#569cd6">string</span> ConvertSQLCommand(<span style="color:#569cd6">string</span> storedProcedureName, <span style="color:#4ec9b0">Parameters</span> parameters);</div>
<div class="t mono" style="left:0px;width:70px;text-align:right;top:751px;font-size:23.33px;line-height:34px;color:#2b91af">32</div>
<div class="t mono" style="left:148px;top:751px;font-size:23.33px;line-height:34px;color:#dcdcdc">        <span style="color:#569cd6">public</span> <span style="color:#569cd6">bool</span> DeleteSP(<span style="color:#4ec9b0">Parameters</span> parameters);</div>
<div class="t mono" style="left:0px;width:70px;text-align:right;top:785px;font-size:23.33px;line-height:34px;color:#2b91af">33</div>
<div class="t mono" style="left:148px;top:785px;font-size:23.33px;line-height:34px;color:#dcdcdc">        <span style="color:#569cd6">public</span> <span style="color:#b8d7a3">T</span> GetByIdSP&lt;<span style="color:#b8d7a3">T</span>&gt;(<span style="color:#4ec9b0">Parameters</span> parameters, <span style="color:#569cd6">bool</span> convertQuery = <span style="color:#569cd6">false</span>);</div>
<div class="t mono" style="left:0px;width:70px;text-align:right;top:819px;font-size:23.33px;line-height:34px;color:#2b91af">34</div>
<div class="t mono" style="left:148px;top:819px;font-size:23.33px;line-height:34px;color:#dcdcdc">        <span style="color:#569cd6">public</span> <span style="color:#4ec9b0">DateTime</span> GetCurrentTime();</div>
<div class="t mono" style="left:0px;width:70px;text-align:right;top:853px;font-size:23.33px;line-height:34px;color:#2b91af">35</div>
<div class="t mono" style="left:148px;top:853px;font-size:23.33px;line-height:34px;color:#dcdcdc">        <span style="color:#569cd6">public</span> <span style="color:#569cd6">string</span> GetHashedString(<span style="color:#569cd6">string</span> source, <span style="color:#569cd6">bool</span> verifyResult = <span style="color:#569cd6">true</span>);</div>
<div class="t mono" style="left:0px;width:70px;text-align:right;top:887px;font-size:23.33px;line-height:34px;color:#2b91af">36</div>
<div class="t mono" style="left:148px;top:887px;font-size:23.33px;line-height:34px;color:#dcdcdc">        <span style="color:#569cd6">public</span> <span style="color:#4ec9b0">PaginationWrapper</span>&lt;<span style="color:#b8d7a3">T</span>&gt; ListSP&lt;<span style="color:#b8d7a3">T</span>&gt;(<span style="color:#4ec9b0">Parameters</span> parameters, <span style="color:#569cd6">string</span> storedProcedureName = <span style="color:#569cd6">null</span>, <span style="color:#569cd6">bool</span> isStoredProcedure</div>
<div class="t mono" style="left:0px;width:70px;text-align:right;top:921px;font-size:23.33px;line-height:34px;color:#2b91af">37</div>
<div class="t mono" style="left:148px;top:921px;font-size:23.33px;line-height:34px;color:#dcdcdc">        <span style="color:#569cd6">public</span> <span style="color:#569cd6">byte</span>[] ResizeThumbnail(<span style="color:#569cd6">byte</span>[] imageBytes, <span style="color:#569cd6">int</span> size = <span style="color:#b5cea8">150</span>, <span style="color:#569cd6">int</span> quality = <span style="color:#b5cea8">75</span>);</div>
<div class="t mono" style="left:0px;width:70px;text-align:right;top:955px;font-size:23.33px;line-height:34px;color:#2b91af">38</div>
<div class="t mono" style="left:148px;top:955px;font-size:23.33px;line-height:34px;color:#dcdcdc">        <span style="color:#569cd6">public</span> <span style="color:#b8d7a3">T</span> SaveSP&lt;<span style="color:#b8d7a3">T</span>&gt;(<span style="color:#b8d7a3">T</span> entity, <span style="color:#4ec9b0">Parameters</span> parameters);</div>
<div class="t mono" style="left:0px;width:70px;text-align:right;top:989px;font-size:23.33px;line-height:34px;color:#2b91af">39</div>
<div class="t mono" style="left:0px;width:70px;text-align:right;top:1023px;font-size:23.33px;line-height:34px;color:#2b91af">41</div>
<div class="t mono" style="left:148px;top:1023px;font-size:23.33px;line-height:34px;color:#dcdcdc">    }</div>
<div class="t mono" style="left:0px;width:70px;text-align:right;top:1057px;font-size:23.33px;line-height:34px;color:#2b91af">42</div>
<div class="t mono" style="left:148px;top:1057px;font-size:23.33px;line-height:34px;color:#dcdcdc">}</div>
<div class="t mono" style="left:148px;top:3px;font-size:23.33px;line-height:34px;color:#dcdcdc"><span style="color:#9b9b9b;position:relative;top:2px">Assembly CoreData, Version=1.0.0.0, Culture=neutral, PublicKeyToken=null</span></div>
<div class="a" style="left:148px;top:2px;width:1010px;height:34px;border:2px solid #a5a5a5"></div>
<div class="t mono" style="left:148px;top:71px;font-size:23.33px;line-height:34px;color:#dcdcdc"><span style="color:#569cd6">using</span> <span style="color:#9b9b9b">...</span></div>
<div class="a" style="left:232px;top:70px;width:46px;height:34px;border:2px solid #a5a5a5"></div>
<div class="t mono" style="left:148px;top:989px;font-size:23.33px;line-height:34px;color:#dcdcdc">        <span style="color:#9b9b9b">...</span><span style="margin-left:4px"><span style="color:#569cd6">public</span> <span style="color:#4ec9b0">Task</span> SaveTransactionLogsAsync(<span style="color:#4ec9b0">TransactionLogs</span> transactionLog);</span></div>
<div class="a" style="left:260px;top:988px;width:46px;height:34px;border:2px solid #a5a5a5"></div>
<div class="a" style="left:144px;top:512px;width:1640px;height:34px;border:4px solid #464646"></div>
</div>
<div class="a" style="left:245.5px;top:770px;width:1.5px;height:32px;background:#f1f1f1;"></div>
<div class="a" style="left:233px;top:422px;width:2px;height:830px;background:#a5a5a5;"></div>
<div class="a" style="left:233px;top:1274px;width:2px;height:74px;background:#a5a5a5;"></div>
<div class="a" style="left:233px;top:1346px;width:9px;height:2px;background:#a5a5a5;"></div>
<svg class="a" style="left:224px;top:268px" width="18" height="18" viewBox="0 0 18 18"><rect x="1" y="1" width="16" height="16" fill="#000" stroke="#a5a5a5" stroke-width="2"/><rect x="4" y="8" width="10" height="2" fill="#fff"/><rect x="8" y="4" width="2" height="10" fill="#fff"/></svg>
<svg class="a" style="left:224px;top:336px" width="18" height="18" viewBox="0 0 18 18"><rect x="1" y="1" width="16" height="16" fill="#000" stroke="#a5a5a5" stroke-width="2"/><rect x="4" y="8" width="10" height="2" fill="#fff"/><rect x="8" y="4" width="2" height="10" fill="#fff"/></svg>
<svg class="a" style="left:224px;top:404px" width="18" height="18" viewBox="0 0 18 18"><rect x="1" y="1" width="16" height="16" fill="#1e1e1e" stroke="#a5a5a5" stroke-width="2"/><rect x="4" y="8" width="10" height="2" fill="#fff"/></svg>
<svg class="a" style="left:224px;top:1254px" width="18" height="18" viewBox="0 0 18 18"><rect x="1" y="1" width="16" height="16" fill="#000" stroke="#a5a5a5" stroke-width="2"/><rect x="4" y="8" width="10" height="2" fill="#fff"/><rect x="8" y="4" width="2" height="10" fill="#fff"/></svg>
<div class="a" style="left:251px;top:468px;width:2px;height:846px;background:repeating-linear-gradient(#6e6e6e 0 6px, transparent 6px 12px)"></div>
<div class="a" style="left:1882px;top:258px;width:40px;height:1316px;background:#3e3e42;"></div>
<div class="a" style="left:1884px;top:260px;width:36px;height:32px;background:#1e1e1e;"></div>
<svg class="a" style="left:1891px;top:264px" width="22" height="24" viewBox="0 0 22 24"><path d="M11 1 V9 M7 5 L11 1 L15 5 M11 15 V23 M7 19 L11 23 L15 19" fill="none" stroke="#f1f1f1" stroke-width="2"/><rect x="0" y="10" width="22" height="2" fill="#f1f1f1"/><rect x="0" y="13" width="22" height="2" fill="#f1f1f1"/></svg>
<svg class="a" style="left:1892px;top:305px" width="18" height="11" viewBox="0 0 18 11"><polygon points="9,0 18,11 0,11" fill="#999999"/></svg>
<div class="a" style="left:1890px;top:328px;width:22px;height:661px;background:#686868;"></div>
<div class="a" style="left:1882px;top:588px;width:38px;height:4px;background:#e8e8e8;"></div>
<svg class="a" style="left:1892px;top:1553px" width="18" height="10" viewBox="0 0 18 10"><polygon points="0,0 18,0 9,10" fill="#999999"/></svg>
<div class="a" style="left:65px;top:1574px;width:1857px;height:36px;background:#3e3e42;"></div>
<div class="a" style="left:66px;top:1576px;width:116px;height:30px;background:#333337;"></div>
<div class="t" style="left:69px;top:1580.09px;font-size:22px;color:#f1f1f1;">100 %</div>
<svg class="a" style="left:166px;top:1589px" width="12" height="7" viewBox="0 0 12 7"><polygon points="0,0 12,0 6.0,7" fill="#f1f1f1"/></svg>
<svg class="a" style="left:196px;top:1583px" width="11" height="17" viewBox="0 0 11 17"><polygon points="11,0 11,17 0,8.5" fill="#999999"/></svg>
<div class="a" style="left:217px;top:1582px;width:633px;height:18px;background:#686868;"></div>
<svg class="a" style="left:1860px;top:1583px" width="11" height="19" viewBox="0 0 11 19"><polygon points="0,0 0,19 11,9.5" fill="#999999"/></svg>
<div class="a" style="left:1934px;top:172px;width:884px;height:1398px;background:#2d2d30;border:2px solid #3f3f46;"></div>
<div class="t" style="left:1945px;top:184.28px;font-size:24px;color:#f1f1f1;transform-origin:0 0;transform:scaleX(0.9903);">Solution Explorer</div>
<svg class="a" style="left:2142px;top:191px" width="557" height="10" viewBox="0 0 557 10"><rect x="0" y="0" width="2" height="2" fill="#555558"/><rect x="8" y="0" width="2" height="2" fill="#555558"/><rect x="16" y="0" width="2" height="2" fill="#555558"/><rect x="24" y="0" width="2" height="2" fill="#555558"/><rect x="32" y="0" width="2" height="2" fill="#555558"/><rect x="40" y="0" width="2" height="2" fill="#555558"/><rect x="48" y="0" width="2" height="2" fill="#555558"/><rect x="56" y="0" width="2" height="2" fill="#555558"/><rect x="64" y="0" width="2" height="2" fill="#555558"/><rect x="72" y="0" width="2" height="2" fill="#555558"/><rect x="80" y="0" width="2" height="2" fill="#555558"/><rect x="88" y="0" width="2" height="2" fill="#555558"/><rect x="96" y="0" width="2" height="2" fill="#555558"/><rect x="104" y="0" width="2" height="2" fill="#555558"/><rect x="112" y="0" width="2" height="2" fill="#555558"/><rect x="120" y="0" width="2" height="2" fill="#555558"/><rect x="128" y="0" width="2" height="2" fill="#555558"/><rect x="136" y="0" width="2" height="2" fill="#555558"/><rect x="144" y="0" width="2" height="2" fill="#555558"/><rect x="152" y="0" width="2" height="2" fill="#555558"/><rect x="160" y="0" width="2" height="2" fill="#555558"/><rect x="168" y="0" width="2" height="2" fill="#555558"/><rect x="176" y="0" width="2" height="2" fill="#555558"/><rect x="184" y="0" width="2" height="2" fill="#555558"/><rect x="192" y="0" width="2" height="2" fill="#555558"/><rect x="200" y="0" width="2" height="2" fill="#555558"/><rect x="208" y="0" width="2" height="2" fill="#555558"/><rect x="216" y="0" width="2" height="2" fill="#555558"/><rect x="224" y="0" width="2" height="2" fill="#555558"/><rect x="232" y="0" width="2" height="2" fill="#555558"/><rect x="240" y="0" width="2" height="2" fill="#555558"/><rect x="248" y="0" width="2" height="2" fill="#555558"/><rect x="256" y="0" width="2" height="2" fill="#555558"/><rect x="264" y="0" width="2" height="2" fill="#555558"/><rect x="272" y="0" width="2" height="2" fill="#555558"/><rect x="280" y="0" width="2" height="2" fill="#555558"/><rect x="288" y="0" width="2" height="2" fill="#555558"/><rect x="296" y="0" width="2" height="2" fill="#555558"/><rect x="304" y="0" width="2" height="2" fill="#555558"/><rect x="312" y="0" width="2" height="2" fill="#555558"/><rect x="320" y="0" width="2" height="2" fill="#555558"/><rect x="328" y="0" width="2" height="2" fill="#555558"/><rect x="336" y="0" width="2" height="2" fill="#555558"/><rect x="344" y="0" width="2" height="2" fill="#555558"/><rect x="352" y="0" width="2" height="2" fill="#555558"/><rect x="360" y="0" width="2" height="2" fill="#555558"/><rect x="368" y="0" width="2" height="2" fill="#555558"/><rect x="376" y="0" width="2" height="2" fill="#555558"/><rect x="384" y="0" width="2" height="2" fill="#555558"/><rect x="392" y="0" width="2" height="2" fill="#555558"/><rect x="400" y="0" width="2" height="2" fill="#555558"/><rect x="408" y="0" width="2" height="2" fill="#555558"/><rect x="416" y="0" width="2" height="2" fill="#555558"/><rect x="424" y="0" width="2" height="2" fill="#555558"/><rect x="432" y="0" width="2" height="2" fill="#555558"/><rect x="440" y="0" width="2" height="2" fill="#555558"/><rect x="448" y="0" width="2" height="2" fill="#555558"/><rect x="456" y="0" width="2" height="2" fill="#555558"/><rect x="464" y="0" width="2" height="2" fill="#555558"/><rect x="472" y="0" width="2" height="2" fill="#555558"/><rect x="480" y="0" width="2" height="2" fill="#555558"/><rect x="488" y="0" width="2" height="2" fill="#555558"/><rect x="496" y="0" width="2" height="2" fill="#555558"/><rect x="504" y="0" width="2" height="2" fill="#555558"/><rect x="512" y="0" width="2" height="2" fill="#555558"/><rect x="520" y="0" width="2" height="2" fill="#555558"/><rect x="528" y="0" width="2" height="2" fill="#555558"/><rect x="536" y="0" width="2" height="2" fill="#555558"/><rect x="544" y="0" width="2" height="2" fill="#555558"/><rect x="552" y="0" width="2" height="2" fill="#555558"/><rect x="4" y="4" width="2" height="2" fill="#555558"/><rect x="12" y="4" width="2" height="2" fill="#555558"/><rect x="20" y="4" width="2" height="2" fill="#555558"/><rect x="28" y="4" width="2" height="2" fill="#555558"/><rect x="36" y="4" width="2" height="2" fill="#555558"/><rect x="44" y="4" width="2" height="2" fill="#555558"/><rect x="52" y="4" width="2" height="2" fill="#555558"/><rect x="60" y="4" width="2" height="2" fill="#555558"/><rect x="68" y="4" width="2" height="2" fill="#555558"/><rect x="76" y="4" width="2" height="2" fill="#555558"/><rect x="84" y="4" width="2" height="2" fill="#555558"/><rect x="92" y="4" width="2" height="2" fill="#555558"/><rect x="100" y="4" width="2" height="2" fill="#555558"/><rect x="108" y="4" width="2" height="2" fill="#555558"/><rect x="116" y="4" width="2" height="2" fill="#555558"/><rect x="124" y="4" width="2" height="2" fill="#555558"/><rect x="132" y="4" width="2" height="2" fill="#555558"/><rect x="140" y="4" width="2" height="2" fill="#555558"/><rect x="148" y="4" width="2" height="2" fill="#555558"/><rect x="156" y="4" width="2" height="2" fill="#555558"/><rect x="164" y="4" width="2" height="2" fill="#555558"/><rect x="172" y="4" width="2" height="2" fill="#555558"/><rect x="180" y="4" width="2" height="2" fill="#555558"/><rect x="188" y="4" width="2" height="2" fill="#555558"/><rect x="196" y="4" width="2" height="2" fill="#555558"/><rect x="204" y="4" width="2" height="2" fill="#555558"/><rect x="212" y="4" width="2" height="2" fill="#555558"/><rect x="220" y="4" width="2" height="2" fill="#555558"/><rect x="228" y="4" width="2" height="2" fill="#555558"/><rect x="236" y="4" width="2" height="2" fill="#555558"/><rect x="244" y="4" width="2" height="2" fill="#555558"/><rect x="252" y="4" width="2" height="2" fill="#555558"/><rect x="260" y="4" width="2" height="2" fill="#555558"/><rect x="268" y="4" width="2" height="2" fill="#555558"/><rect x="276" y="4" width="2" height="2" fill="#555558"/><rect x="284" y="4" width="2" height="2" fill="#555558"/><rect x="292" y="4" width="2" height="2" fill="#555558"/><rect x="300" y="4" width="2" height="2" fill="#555558"/><rect x="308" y="4" width="2" height="2" fill="#555558"/><rect x="316" y="4" width="2" height="2" fill="#555558"/><rect x="324" y="4" width="2" height="2" fill="#555558"/><rect x="332" y="4" width="2" height="2" fill="#555558"/><rect x="340" y="4" width="2" height="2" fill="#555558"/><rect x="348" y="4" width="2" height="2" fill="#555558"/><rect x="356" y="4" width="2" height="2" fill="#555558"/><rect x="364" y="4" width="2" height="2" fill="#555558"/><rect x="372" y="4" width="2" height="2" fill="#555558"/><rect x="380" y="4" width="2" height="2" fill="#555558"/><rect x="388" y="4" width="2" height="2" fill="#555558"/><rect x="396" y="4" width="2" height="2" fill="#555558"/><rect x="404" y="4" width="2" height="2" fill="#555558"/><rect x="412" y="4" width="2" height="2" fill="#555558"/><rect x="420" y="4" width="2" height="2" fill="#555558"/><rect x="428" y="4" width="2" height="2" fill="#555558"/><rect x="436" y="4" width="2" height="2" fill="#555558"/><rect x="444" y="4" width="2" height="2" fill="#555558"/><rect x="452" y="4" width="2" height="2" fill="#555558"/><rect x="460" y="4" width="2" height="2" fill="#555558"/><rect x="468" y="4" width="2" height="2" fill="#555558"/><rect x="476" y="4" width="2" height="2" fill="#555558"/><rect x="484" y="4" width="2" height="2" fill="#555558"/><rect x="492" y="4" width="2" height="2" fill="#555558"/><rect x="500" y="4" width="2" height="2" fill="#555558"/><rect x="508" y="4" width="2" height="2" fill="#555558"/><rect x="516" y="4" width="2" height="2" fill="#555558"/><rect x="524" y="4" width="2" height="2" fill="#555558"/><rect x="532" y="4" width="2" height="2" fill="#555558"/><rect x="540" y="4" width="2" height="2" fill="#555558"/><rect x="548" y="4" width="2" height="2" fill="#555558"/><rect x="556" y="4" width="2" height="2" fill="#555558"/><rect x="0" y="8" width="2" height="2" fill="#555558"/><rect x="8" y="8" width="2" height="2" fill="#555558"/><rect x="16" y="8" width="2" height="2" fill="#555558"/><rect x="24" y="8" width="2" height="2" fill="#555558"/><rect x="32" y="8" width="2" height="2" fill="#555558"/><rect x="40" y="8" width="2" height="2" fill="#555558"/><rect x="48" y="8" width="2" height="2" fill="#555558"/><rect x="56" y="8" width="2" height="2" fill="#555558"/><rect x="64" y="8" width="2" height="2" fill="#555558"/><rect x="72" y="8" width="2" height="2" fill="#555558"/><rect x="80" y="8" width="2" height="2" fill="#555558"/><rect x="88" y="8" width="2" height="2" fill="#555558"/><rect x="96" y="8" width="2" height="2" fill="#555558"/><rect x="104" y="8" width="2" height="2" fill="#555558"/><rect x="112" y="8" width="2" height="2" fill="#555558"/><rect x="120" y="8" width="2" height="2" fill="#555558"/><rect x="128" y="8" width="2" height="2" fill="#555558"/><rect x="136" y="8" width="2" height="2" fill="#555558"/><rect x="144" y="8" width="2" height="2" fill="#555558"/><rect x="152" y="8" width="2" height="2" fill="#555558"/><rect x="160" y="8" width="2" height="2" fill="#555558"/><rect x="168" y="8" width="2" height="2" fill="#555558"/><rect x="176" y="8" width="2" height="2" fill="#555558"/><rect x="184" y="8" width="2" height="2" fill="#555558"/><rect x="192" y="8" width="2" height="2" fill="#555558"/><rect x="200" y="8" width="2" height="2" fill="#555558"/><rect x="208" y="8" width="2" height="2" fill="#555558"/><rect x="216" y="8" width="2" height="2" fill="#555558"/><rect x="224" y="8" width="2" height="2" fill="#555558"/><rect x="232" y="8" width="2" height="2" fill="#555558"/><rect x="240" y="8" width="2" height="2" fill="#555558"/><rect x="248" y="8" width="2" height="2" fill="#555558"/><rect x="256" y="8" width="2" height="2" fill="#555558"/><rect x="264" y="8" width="2" height="2" fill="#555558"/><rect x="272" y="8" width="2" height="2" fill="#555558"/><rect x="280" y="8" width="2" height="2" fill="#555558"/><rect x="288" y="8" width="2" height="2" fill="#555558"/><rect x="296" y="8" width="2" height="2" fill="#555558"/><rect x="304" y="8" width="2" height="2" fill="#555558"/><rect x="312" y="8" width="2" height="2" fill="#555558"/><rect x="320" y="8" width="2" height="2" fill="#555558"/><rect x="328" y="8" width="2" height="2" fill="#555558"/><rect x="336" y="8" width="2" height="2" fill="#555558"/><rect x="344" y="8" width="2" height="2" fill="#555558"/><rect x="352" y="8" width="2" height="2" fill="#555558"/><rect x="360" y="8" width="2" height="2" fill="#555558"/><rect x="368" y="8" width="2" height="2" fill="#555558"/><rect x="376" y="8" width="2" height="2" fill="#555558"/><rect x="384" y="8" width="2" height="2" fill="#555558"/><rect x="392" y="8" width="2" height="2" fill="#555558"/><rect x="400" y="8" width="2" height="2" fill="#555558"/><rect x="408" y="8" width="2" height="2" fill="#555558"/><rect x="416" y="8" width="2" height="2" fill="#555558"/><rect x="424" y="8" width="2" height="2" fill="#555558"/><rect x="432" y="8" width="2" height="2" fill="#555558"/><rect x="440" y="8" width="2" height="2" fill="#555558"/><rect x="448" y="8" width="2" height="2" fill="#555558"/><rect x="456" y="8" width="2" height="2" fill="#555558"/><rect x="464" y="8" width="2" height="2" fill="#555558"/><rect x="472" y="8" width="2" height="2" fill="#555558"/><rect x="480" y="8" width="2" height="2" fill="#555558"/><rect x="488" y="8" width="2" height="2" fill="#555558"/><rect x="496" y="8" width="2" height="2" fill="#555558"/><rect x="504" y="8" width="2" height="2" fill="#555558"/><rect x="512" y="8" width="2" height="2" fill="#555558"/><rect x="520" y="8" width="2" height="2" fill="#555558"/><rect x="528" y="8" width="2" height="2" fill="#555558"/><rect x="536" y="8" width="2" height="2" fill="#555558"/><rect x="544" y="8" width="2" height="2" fill="#555558"/><rect x="552" y="8" width="2" height="2" fill="#555558"/></svg>
<svg class="a" style="left:2716px;top:192px" width="16" height="8" viewBox="0 0 16 8"><polygon points="0,0 16,0 8.0,8" fill="#f1f1f1"/></svg>
<svg class="a" style="left:2751px;top:185px" width="14" height="22" viewBox="0 0 14 22"><rect x="3" y="1" width="8" height="11" fill="none" stroke="#f1f1f1" stroke-width="2"/><rect x="0" y="11" width="14" height="2" fill="#f1f1f1"/><rect x="6" y="13" width="2" height="9" fill="#f1f1f1"/></svg>
<svg class="a" style="left:2782px;top:188px" width="20" height="17" viewBox="0 0 20 17"><path d="M1 1 L19 16 M19 1 L1 16" stroke="#f1f1f1" stroke-width="2.5"/></svg>
<svg class="a" style="left:1954px;top:234px" width="24" height="24" viewBox="0 0 24 24"><circle cx="12" cy="12" r="12" fill="#525252"/><path d="M19 12 H7 M12 6 L6 12 L12 18" fill="none" stroke="#2d2d30" stroke-width="3.2"/></svg>
<svg class="a" style="left:1998px;top:234px" width="24" height="24" viewBox="0 0 24 24"><circle cx="12" cy="12" r="12" fill="#75beff"/><path d="M5 12 H17 M12 6 L18 12 L12 18" fill="none" stroke="#2d2d30" stroke-width="3.2"/></svg>
<svg class="a" style="left:2040px;top:232px" width="28" height="29" viewBox="0 0 28 29"><path d="M14 2 L27 15 V28 H3 V15 Z" fill="#2d2d30" stroke="#c8c8c8" stroke-width="2"/><path d="M1 16 L14 2 L27 16" fill="none" stroke="#c8c8c8" stroke-width="2"/><rect x="21" y="0" width="2" height="8" fill="#c8c8c8"/><rect x="10" y="17" width="8" height="11" fill="#c8c8c8"/></svg>
<svg class="a" style="left:2086px;top:231px" width="28" height="28" viewBox="0 0 28 28"><path d="M10 1 H27 V17 H10 Z" fill="#dcb67a"/><rect x="18" y="3" width="6" height="2" fill="#2d2d30"/><rect x="0" y="11" width="18" height="16" fill="#2d2d30"/><rect x="1" y="12" width="17" height="14" fill="none" stroke="#c8c8c8" stroke-width="2"/><path d="M3 9 V4 H8" fill="none" stroke="#75beff" stroke-width="2"/><polygon points="8,0 12,4 8,8" fill="#75beff"/><path d="M26 20 V24 H21" fill="none" stroke="#75beff" stroke-width="2"/><polygon points="21,20 17,24 21,28" fill="#75beff"/></svg>
<svg class="a" style="left:2128px;top:243px" width="12" height="6" viewBox="0 0 12 6"><polygon points="0,0 12,0 6.0,6" fill="#999999"/></svg>
<div class="a" style="left:2154px;top:226px;width:2px;height:40px;background:#3f3f46;"></div>
<svg class="a" style="left:2173px;top:232px" width="30" height="29" viewBox="0 0 30 29"><polygon points="0,0 12,0 7,5 7,9 5,9 5,5" fill="#c8c8c8"/><circle cx="17" cy="18" r="9" fill="none" stroke="#c8c8c8" stroke-width="2"/><path d="M16 13 V19 H21" fill="none" stroke="#c8c8c8" stroke-width="2"/></svg>
<svg class="a" style="left:2214px;top:243px" width="12" height="6" viewBox="0 0 12 6"><polygon points="0,0 12,0 6.0,6" fill="#999999"/></svg>
<svg class="a" style="left:2242px;top:233px" width="24" height="25" viewBox="0 0 24 25"><path d="M20 6 H5 M10 1 L4 6 L10 11" fill="none" stroke="#c8c8c8" stroke-width="3"/><path d="M4 19 H19 M14 14 L20 19 L14 24" fill="none" stroke="#c8c8c8" stroke-width="3"/></svg>
<svg class="a" style="left:2288px;top:234px" width="22" height="22" viewBox="0 0 22 22"><path d="M9 1 H21 V13" fill="none" stroke="#c8c8c8" stroke-width="2"/><path d="M5 5 H17 V17" fill="none" stroke="#c8c8c8" stroke-width="2"/><rect x="1" y="9" width="12" height="12" fill="#2d2d30" stroke="#c8c8c8" stroke-width="2"/><rect x="4" y="14" width="6" height="2" fill="#75beff"/></svg>
<svg class="a" style="left:2328px;top:232px" width="28" height="28" viewBox="0 0 28 28"><path d="M5 18 H1 V1 H8" fill="none" stroke="#c8c8c8" stroke-width="2"/><path d="M12 1 H23 L27 5 V18 H24" fill="none" stroke="#c8c8c8" stroke-width="2"/><path d="M7 8 H17 L21 12 V27 H7 Z" fill="#2d2d30" stroke="#c8c8c8" stroke-width="2"/><rect x="10" y="14" width="8" height="2" fill="#c8c8c8"/><rect x="10" y="18" width="8" height="2" fill="#c8c8c8"/><rect x="10" y="22" width="8" height="2" fill="#c8c8c8"/></svg>
<div class="a" style="left:2373px;top:226px;width:2px;height:40px;background:#3f3f46;"></div>
<svg class="a" style="left:2390px;top:232px" width="28" height="28" viewBox="0 0 28 28"><rect x="0" y="0" width="6" height="6" fill="#c8c8c8"/><rect x="8" y="8" width="8" height="8" fill="#c8c8c8"/><rect x="18" y="18" width="10" height="10" fill="#c8c8c8"/><path d="M2.5 6 V12 H8 M12 16 V23 H18" fill="none" stroke="#c8c8c8" stroke-width="2"/></svg>
<svg class="a" style="left:2432px;top:243px" width="12" height="6" viewBox="0 0 12 6"><polygon points="0,0 12,0 6.0,6" fill="#999999"/></svg>
<div class="a" style="left:2458px;top:226px;width:2px;height:40px;background:#3f3f46;"></div>
<svg class="a" style="left:2474px;top:232px" width="28" height="28" viewBox="0 0 28 28"><path d="M3 25 L14 14" stroke="#c8c8c8" stroke-width="5" stroke-linecap="round"/><circle cx="19" cy="9" r="8" fill="#c8c8c8"/><rect x="17" y="-2" width="8" height="9" fill="#2d2d30" transform="rotate(45 21 3)"/></svg>
<div class="a" style="left:2510px;top:222px;width:44px;height:48px;background:transparent;border:2px solid #3399ff;"></div>
<div class="a" style="left:2518px;top:248px;width:28px;height:2px;background:#c8c8c8;"></div>
<div class="a" style="left:2530px;top:242px;width:16px;height:8px;background:#c8c8c8;"></div>
<div class="a" style="left:1936px;top:274px;width:880px;height:2px;background:#3f3f46;"></div>
<div class="a" style="left:1936px;top:276px;width:856px;height:40px;background:#333337;"></div>
<div class="a" style="left:2792px;top:276px;width:24px;height:40px;background:#3f3f46;"></div>
<div class="t" style="left:1947px;top:284.28px;font-size:24px;color:#999999;transform-origin:0 0;transform:scaleX(0.9730);">Search Solution Explorer (Ctrl+ş)</div>
<svg class="a" style="left:2760px;top:283px" width="26" height="26" viewBox="0 0 26 26"><circle cx="17" cy="9" r="7" fill="none" stroke="#f1f1f1" stroke-width="3"/><line x1="12" y1="14" x2="2" y2="24" stroke="#f1f1f1" stroke-width="4" stroke-linecap="round"/></svg>
<svg class="a" style="left:2797px;top:293px" width="12" height="6" viewBox="0 0 12 6"><polygon points="0,0 12,0 6.0,6" fill="#f1f1f1"/></svg>
<div class="a" style="left:1936px;top:316px;width:880px;height:2px;background:#3f3f46;"></div>
<div class="a" style="left:1936px;top:318px;width:880px;height:4px;background:#2d2d30;"></div>
<div class="a" style="left:1936px;top:276px;width:2px;height:40px;background:#3f3f46;"></div>
<div class="a" style="left:1936px;top:322px;width:880px;height:1246px;background:#252526;"></div>
<div class="a" style="left:2782px;top:326px;width:34px;height:1242px;background:#3e3e42;"></div>
<svg class="a" style="left:2790px;top:338px" width="18" height="10" viewBox="0 0 18 10"><polygon points="9,0 18,10 0,10" fill="#999999"/></svg>
<div class="a" style="left:2790px;top:838px;width:18px;height:409px;background:#686868;"></div>
<svg class="a" style="left:2790px;top:1547px" width="18" height="9" viewBox="0 0 18 9"><polygon points="0,0 18,0 9,9" fill="#999999"/></svg>
<div class="a" style="left:1936px;top:322px;width:846px;height:1246px;overflow:hidden">
<svg class="a" style="left:94px;top:17px" width="13" height="13" viewBox="0 0 13 13"><polygon points="0,13 13,0 13,13" fill="#f1f1f1"/></svg>
<svg class="a" style="left:120px;top:18px" width="10" height="14" viewBox="0 0 10 14"><path d="M1.2 5.5 A3.8 3.8 0 0 1 8.8 5.5" fill="none" stroke="#3ab0ea" stroke-width="2.1"/><rect x="0" y="6.2" width="10" height="7.8" fill="#3ab0ea"/><rect x="4" y="8.2" width="2" height="3.6" fill="#1e1e1e"/></svg>
<svg class="a" style="left:134.5px;top:11.5px" width="28" height="22" viewBox="0 0 28 22"><path d="M3 10 V3 Q3 2 4 2 H9.5 L11.5 0.5 H26 Q27 0.5 27 1.5 V21" fill="none" stroke="#dcb67a" stroke-width="2.3"/><polygon points="0,12 19.5,12 26.5,22 3.5,22" fill="#dcb67a"/></svg>
<div class="t" style="left:175px;top:12.28px;font-size:24px;color:#f1f1f1;transform-origin:0 0;transform:scaleX(0.9414);">Filters</div>
<svg class="a" style="left:131px;top:49px" width="11" height="21" viewBox="0 0 11 21"><polygon points="1.1,1.8 9,10.1 1.1,18.4" fill="none" stroke="#f1f1f1" stroke-width="2.2"/></svg>
<svg class="a" style="left:156px;top:54px" width="10" height="14" viewBox="0 0 10 14"><path d="M1.2 5.5 A3.8 3.8 0 0 1 8.8 5.5" fill="none" stroke="#3ab0ea" stroke-width="2.1"/><rect x="0" y="6.2" width="10" height="7.8" fill="#3ab0ea"/><rect x="4" y="8.2" width="2" height="3.6" fill="#1e1e1e"/></svg>
<svg class="a" style="left:174px;top:51px" width="24" height="17" viewBox="0 0 24 17"><path d="M9.5 4 A5.5 6 0 1 0 9.5 13" fill="none" stroke="#89d185" stroke-width="3.6"/><path d="M15 0 V11 M19.5 0 V11 M12 3.5 H22.5 M12 7.5 H22.5" stroke="#97e497" stroke-width="2.2"/></svg>
<div class="t" style="left:211px;top:48.28px;font-size:24px;color:#f1f1f1;transform-origin:0 0;transform:scaleX(0.9867);">AuthorizationHeaderParameterOperationFilter.cs</div>
<svg class="a" style="left:131px;top:85px" width="11" height="21" viewBox="0 0 11 21"><polygon points="1.1,1.8 9,10.1 1.1,18.4" fill="none" stroke="#f1f1f1" stroke-width="2.2"/></svg>
<svg class="a" style="left:156px;top:90px" width="10" height="14" viewBox="0 0 10 14"><path d="M1.2 5.5 A3.8 3.8 0 0 1 8.8 5.5" fill="none" stroke="#3ab0ea" stroke-width="2.1"/><rect x="0" y="6.2" width="10" height="7.8" fill="#3ab0ea"/><rect x="4" y="8.2" width="2" height="3.6" fill="#1e1e1e"/></svg>
<svg class="a" style="left:174px;top:87px" width="24" height="17" viewBox="0 0 24 17"><path d="M9.5 4 A5.5 6 0 1 0 9.5 13" fill="none" stroke="#89d185" stroke-width="3.6"/><path d="M15 0 V11 M19.5 0 V11 M12 3.5 H22.5 M12 7.5 H22.5" stroke="#97e497" stroke-width="2.2"/></svg>
<div class="t" style="left:211px;top:84.28px;font-size:24px;color:#f1f1f1;transform-origin:0 0;transform:scaleX(0.9891);">ClaimRequirementAttribute.cs</div>
<svg class="a" style="left:131px;top:121px" width="11" height="21" viewBox="0 0 11 21"><polygon points="1.1,1.8 9,10.1 1.1,18.4" fill="none" stroke="#f1f1f1" stroke-width="2.2"/></svg>
<svg class="a" style="left:156px;top:126px" width="10" height="14" viewBox="0 0 10 14"><path d="M1.2 5.5 A3.8 3.8 0 0 1 8.8 5.5" fill="none" stroke="#3ab0ea" stroke-width="2.1"/><rect x="0" y="6.2" width="10" height="7.8" fill="#3ab0ea"/><rect x="4" y="8.2" width="2" height="3.6" fill="#1e1e1e"/></svg>
<svg class="a" style="left:174px;top:123px" width="24" height="17" viewBox="0 0 24 17"><path d="M9.5 4 A5.5 6 0 1 0 9.5 13" fill="none" stroke="#89d185" stroke-width="3.6"/><path d="M15 0 V11 M19.5 0 V11 M12 3.5 H22.5 M12 7.5 H22.5" stroke="#97e497" stroke-width="2.2"/></svg>
<div class="t" style="left:211px;top:120.28px;font-size:24px;color:#f1f1f1;transform-origin:0 0;transform:scaleX(0.9857);">ExceptionHandlingMiddleware.cs</div>
<svg class="a" style="left:131px;top:157px" width="11" height="21" viewBox="0 0 11 21"><polygon points="1.1,1.8 9,10.1 1.1,18.4" fill="none" stroke="#f1f1f1" stroke-width="2.2"/></svg>
<svg class="a" style="left:156px;top:162px" width="10" height="14" viewBox="0 0 10 14"><path d="M1.2 5.5 A3.8 3.8 0 0 1 8.8 5.5" fill="none" stroke="#3ab0ea" stroke-width="2.1"/><rect x="0" y="6.2" width="10" height="7.8" fill="#3ab0ea"/><rect x="4" y="8.2" width="2" height="3.6" fill="#1e1e1e"/></svg>
<svg class="a" style="left:174px;top:159px" width="24" height="17" viewBox="0 0 24 17"><path d="M9.5 4 A5.5 6 0 1 0 9.5 13" fill="none" stroke="#89d185" stroke-width="3.6"/><path d="M15 0 V11 M19.5 0 V11 M12 3.5 H22.5 M12 7.5 H22.5" stroke="#97e497" stroke-width="2.2"/></svg>
<div class="t" style="left:211px;top:156.28px;font-size:24px;color:#f1f1f1;transform-origin:0 0;transform:scaleX(0.9909);">LoggingMiddleware.cs</div>
<svg class="a" style="left:120px;top:198px" width="10" height="14" viewBox="0 0 10 14"><path d="M1.2 5.5 A3.8 3.8 0 0 1 8.8 5.5" fill="none" stroke="#3ab0ea" stroke-width="2.1"/><rect x="0" y="6.2" width="10" height="7.8" fill="#3ab0ea"/><rect x="4" y="8.2" width="2" height="3.6" fill="#1e1e1e"/></svg>
<svg class="a" style="left:137px;top:189px" width="27" height="22" viewBox="0 0 27 22"><polygon points="0,5 8,5 10,0 27,0 27,22 0,22" fill="#dcb67a"/><rect x="12" y="3" width="12" height="2" fill="#252526"/></svg>
<svg class="a" style="left:150px;top:203px" width="13" height="13" viewBox="0 0 13 13"><path d="M1.5 1.5 L11.5 11.5 M11.5 1.5 L1.5 11.5" stroke="#e51400" stroke-width="3"/></svg>
<div class="t" style="left:175px;top:192.28px;font-size:24px;color:#f1f1f1;transform-origin:0 0;transform:scaleX(1.0060);">wwwroot</div>
<svg class="a" style="left:120px;top:234px" width="10" height="14" viewBox="0 0 10 14"><path d="M1.2 5.5 A3.8 3.8 0 0 1 8.8 5.5" fill="none" stroke="#3ab0ea" stroke-width="2.1"/><rect x="0" y="6.2" width="10" height="7.8" fill="#3ab0ea"/><rect x="4" y="8.2" width="2" height="3.6" fill="#1e1e1e"/></svg>
<svg class="a" style="left:139px;top:228px" width="20" height="23" viewBox="0 0 20 23"><path d="M1 1 H13 L19 7 V22 H1 Z" fill="none" stroke="#c8c8c8" stroke-width="2"/></svg>
<div class="t" style="left:175px;top:228.28px;font-size:24px;color:#f1f1f1;transform-origin:0 0;transform:scaleX(0.9643);">app.yaml</div>
<svg class="a" style="left:120px;top:270px" width="10" height="14" viewBox="0 0 10 14"><path d="M1.2 5.5 A3.8 3.8 0 0 1 8.8 5.5" fill="none" stroke="#3ab0ea" stroke-width="2.1"/><rect x="0" y="6.2" width="10" height="7.8" fill="#3ab0ea"/><rect x="4" y="8.2" width="2" height="3.6" fill="#1e1e1e"/></svg>
<svg class="a" style="left:135px;top:262px" width="29" height="27" viewBox="0 0 29 27"><path d="M9 21 V4 Q9 1 12 1 H28 M21 1 Q24 1 24 4 V24 Q24 26 20 26 H14" fill="none" stroke="#c8c8c8" stroke-width="2.2"/><circle cx="7" cy="21" r="6" fill="#888"/><circle cx="7" cy="21" r="2.5" fill="#252526"/></svg>
<div class="t" style="left:175px;top:264.28px;font-size:24px;color:#f1f1f1;transform-origin:0 0;transform:scaleX(0.9740);">coreSettings.json</div>
<svg class="a" style="left:120px;top:306px" width="10" height="14" viewBox="0 0 10 14"><path d="M1.2 5.5 A3.8 3.8 0 0 1 8.8 5.5" fill="none" stroke="#3ab0ea" stroke-width="2.1"/><rect x="0" y="6.2" width="10" height="7.8" fill="#3ab0ea"/><rect x="4" y="8.2" width="2" height="3.6" fill="#1e1e1e"/></svg>
<svg class="a" style="left:135px;top:298px" width="29" height="27" viewBox="0 0 29 27"><path d="M9 21 V4 Q9 1 12 1 H28 M21 1 Q24 1 24 4 V24 Q24 26 20 26 H14" fill="none" stroke="#c8c8c8" stroke-width="2.2"/><circle cx="7" cy="21" r="6" fill="#888"/><circle cx="7" cy="21" r="2.5" fill="#252526"/></svg>
<div class="t" style="left:175px;top:300.28px;font-size:24px;color:#f1f1f1;transform-origin:0 0;transform:scaleX(0.9820);">coreSettings.Production.json</div>
<svg class="a" style="left:120px;top:342px" width="10" height="14" viewBox="0 0 10 14"><path d="M1.2 5.5 A3.8 3.8 0 0 1 8.8 5.5" fill="none" stroke="#3ab0ea" stroke-width="2.1"/><rect x="0" y="6.2" width="10" height="7.8" fill="#3ab0ea"/><rect x="4" y="8.2" width="2" height="3.6" fill="#1e1e1e"/></svg>
<svg class="a" style="left:139px;top:336px" width="20" height="23" viewBox="0 0 20 23"><path d="M1 1 H13 L19 7 V22 H1 Z" fill="none" stroke="#c8c8c8" stroke-width="2"/></svg>
<div class="t" style="left:175px;top:336.28px;font-size:24px;color:#f1f1f1;transform-origin:0 0;transform:scaleX(0.9992);">Dockerfile</div>
<svg class="a" style="left:95px;top:373px" width="11" height="21" viewBox="0 0 11 21"><polygon points="1.1,1.8 9,10.1 1.1,18.4" fill="none" stroke="#f1f1f1" stroke-width="2.2"/></svg>
<svg class="a" style="left:120px;top:378px" width="10" height="14" viewBox="0 0 10 14"><path d="M1.2 5.5 A3.8 3.8 0 0 1 8.8 5.5" fill="none" stroke="#3ab0ea" stroke-width="2.1"/><rect x="0" y="6.2" width="10" height="7.8" fill="#3ab0ea"/><rect x="4" y="8.2" width="2" height="3.6" fill="#1e1e1e"/></svg>
<svg class="a" style="left:138px;top:375px" width="24" height="17" viewBox="0 0 24 17"><path d="M9.5 4 A5.5 6 0 1 0 9.5 13" fill="none" stroke="#89d185" stroke-width="3.6"/><path d="M15 0 V11 M19.5 0 V11 M12 3.5 H22.5 M12 7.5 H22.5" stroke="#97e497" stroke-width="2.2"/></svg>
<div class="t" style="left:175px;top:372.28px;font-size:24px;color:#f1f1f1;transform-origin:0 0;transform:scaleX(0.9338);">Program.cs</div>
<svg class="a" style="left:95px;top:409px" width="11" height="21" viewBox="0 0 11 21"><polygon points="1.1,1.8 9,10.1 1.1,18.4" fill="none" stroke="#f1f1f1" stroke-width="2.2"/></svg>
<svg class="a" style="left:120px;top:414px" width="10" height="14" viewBox="0 0 10 14"><path d="M1.2 5.5 A3.8 3.8 0 0 1 8.8 5.5" fill="none" stroke="#3ab0ea" stroke-width="2.1"/><rect x="0" y="6.2" width="10" height="7.8" fill="#3ab0ea"/><rect x="4" y="8.2" width="2" height="3.6" fill="#1e1e1e"/></svg>
<svg class="a" style="left:138px;top:411px" width="24" height="17" viewBox="0 0 24 17"><path d="M9.5 4 A5.5 6 0 1 0 9.5 13" fill="none" stroke="#89d185" stroke-width="3.6"/><path d="M15 0 V11 M19.5 0 V11 M12 3.5 H22.5 M12 7.5 H22.5" stroke="#97e497" stroke-width="2.2"/></svg>
<div class="t" style="left:175px;top:408.28px;font-size:24px;color:#f1f1f1;transform-origin:0 0;transform:scaleX(0.9309);">Startup.cs</div>
<svg class="a" style="left:57px;top:449px" width="13" height="13" viewBox="0 0 13 13"><polygon points="0,13 13,0 13,13" fill="#f1f1f1"/></svg>
<svg class="a" style="left:83px;top:450px" width="10" height="14" viewBox="0 0 10 14"><path d="M1.2 5.5 A3.8 3.8 0 0 1 8.8 5.5" fill="none" stroke="#3ab0ea" stroke-width="2.1"/><rect x="0" y="6.2" width="10" height="7.8" fill="#3ab0ea"/><rect x="4" y="8.2" width="2" height="3.6" fill="#1e1e1e"/></svg>
<svg class="a" style="left:98px;top:444px" width="28" height="24" viewBox="0 0 28 24"><rect x="1" y="1" width="26" height="22" fill="none" stroke="#89d185" stroke-width="2.2"/><path d="M12.3 8.4 A4.3 4.9 0 1 0 12.3 15.6" fill="none" stroke="#c8c8c8" stroke-width="2.4"/><path d="M17 5.5 V16.5 M21.5 5.5 V16.5 M14 8.5 H24.5 M14 13 H24.5" stroke="#c8c8c8" stroke-width="2"/></svg>
<div class="t" style="left:138px;top:444.28px;font-size:24px;color:#f1f1f1;transform-origin:0 0;transform:scaleX(0.9651);">CoreType</div>
<svg class="a" style="left:95px;top:481px" width="11" height="21" viewBox="0 0 11 21"><polygon points="1.1,1.8 9,10.1 1.1,18.4" fill="none" stroke="#f1f1f1" stroke-width="2.2"/></svg>
<svg class="a" style="left:135px;top:482px" width="31" height="27" viewBox="0 0 31 27"><rect x="20" y="0" width="8" height="10" fill="#c8c8c8"/><rect x="6" y="2" width="6" height="6" fill="#c8c8c8"/><rect x="13.5" y="4.5" width="4" height="2" fill="#c8c8c8"/><rect x="0" y="12" width="6" height="6" fill="#c8c8c8"/><rect x="7.5" y="14" width="4" height="2" fill="#c8c8c8"/><rect x="14" y="10" width="8" height="10" fill="#c8c8c8" stroke="#252526" stroke-width="1.6"/></svg>
<div class="t" style="left:175px;top:480.28px;font-size:24px;color:#f1f1f1;transform-origin:0 0;transform:scaleX(0.9811);">Dependencies</div>
<svg class="a" style="left:94px;top:521px" width="13" height="13" viewBox="0 0 13 13"><polygon points="0,13 13,0 13,13" fill="#f1f1f1"/></svg>
<svg class="a" style="left:120px;top:522px" width="10" height="14" viewBox="0 0 10 14"><path d="M1.2 5.5 A3.8 3.8 0 0 1 8.8 5.5" fill="none" stroke="#3ab0ea" stroke-width="2.1"/><rect x="0" y="6.2" width="10" height="7.8" fill="#3ab0ea"/><rect x="4" y="8.2" width="2" height="3.6" fill="#1e1e1e"/></svg>
<svg class="a" style="left:134.5px;top:515.5px" width="28" height="22" viewBox="0 0 28 22"><path d="M3 10 V3 Q3 2 4 2 H9.5 L11.5 0.5 H26 Q27 0.5 27 1.5 V21" fill="none" stroke="#dcb67a" stroke-width="2.3"/><polygon points="0,12 19.5,12 26.5,22 3.5,22" fill="#dcb67a"/></svg>
<div class="t" style="left:175px;top:516.28px;font-size:24px;color:#f1f1f1;transform-origin:0 0;transform:scaleX(0.9973);">Common</div>
<svg class="a" style="left:131px;top:553px" width="11" height="21" viewBox="0 0 11 21"><polygon points="1.1,1.8 9,10.1 1.1,18.4" fill="none" stroke="#f1f1f1" stroke-width="2.2"/></svg>
<svg class="a" style="left:156px;top:558px" width="10" height="14" viewBox="0 0 10 14"><path d="M1.2 5.5 A3.8 3.8 0 0 1 8.8 5.5" fill="none" stroke="#3ab0ea" stroke-width="2.1"/><rect x="0" y="6.2" width="10" height="7.8" fill="#3ab0ea"/><rect x="4" y="8.2" width="2" height="3.6" fill="#1e1e1e"/></svg>
<svg class="a" style="left:174px;top:555px" width="24" height="17" viewBox="0 0 24 17"><path d="M9.5 4 A5.5 6 0 1 0 9.5 13" fill="none" stroke="#89d185" stroke-width="3.6"/><path d="M15 0 V11 M19.5 0 V11 M12 3.5 H22.5 M12 7.5 H22.5" stroke="#97e497" stroke-width="2.2"/></svg>
<div class="t" style="left:211px;top:552.28px;font-size:24px;color:#f1f1f1;transform-origin:0 0;transform:scaleX(0.9321);">Constants.cs</div>
<svg class="a" style="left:94px;top:593px" width="13" height="13" viewBox="0 0 13 13"><polygon points="0,13 13,0 13,13" fill="#f1f1f1"/></svg>
<svg class="a" style="left:120px;top:594px" width="10" height="14" viewBox="0 0 10 14"><path d="M1.2 5.5 A3.8 3.8 0 0 1 8.8 5.5" fill="none" stroke="#3ab0ea" stroke-width="2.1"/><rect x="0" y="6.2" width="10" height="7.8" fill="#3ab0ea"/><rect x="4" y="8.2" width="2" height="3.6" fill="#1e1e1e"/></svg>
<svg class="a" style="left:134.5px;top:587.5px" width="28" height="22" viewBox="0 0 28 22"><path d="M3 10 V3 Q3 2 4 2 H9.5 L11.5 0.5 H26 Q27 0.5 27 1.5 V21" fill="none" stroke="#dcb67a" stroke-width="2.3"/><polygon points="0,12 19.5,12 26.5,22 3.5,22" fill="#dcb67a"/></svg>
<div class="t" style="left:175px;top:588.28px;font-size:24px;color:#f1f1f1;transform-origin:0 0;transform:scaleX(0.9979);">Models</div>
<svg class="a" style="left:131px;top:625px" width="11" height="21" viewBox="0 0 11 21"><polygon points="1.1,1.8 9,10.1 1.1,18.4" fill="none" stroke="#f1f1f1" stroke-width="2.2"/></svg>
<svg class="a" style="left:156px;top:630px" width="10" height="14" viewBox="0 0 10 14"><path d="M1.2 5.5 A3.8 3.8 0 0 1 8.8 5.5" fill="none" stroke="#3ab0ea" stroke-width="2.1"/><rect x="0" y="6.2" width="10" height="7.8" fill="#3ab0ea"/><rect x="4" y="8.2" width="2" height="3.6" fill="#1e1e1e"/></svg>
<svg class="a" style="left:174px;top:627px" width="24" height="17" viewBox="0 0 24 17"><path d="M9.5 4 A5.5 6 0 1 0 9.5 13" fill="none" stroke="#89d185" stroke-width="3.6"/><path d="M15 0 V11 M19.5 0 V11 M12 3.5 H22.5 M12 7.5 H22.5" stroke="#97e497" stroke-width="2.2"/></svg>
<div class="t" style="left:211px;top:624.28px;font-size:24px;color:#f1f1f1;transform-origin:0 0;transform:scaleX(0.9216);">BasketData.cs</div>
<svg class="a" style="left:131px;top:661px" width="11" height="21" viewBox="0 0 11 21"><polygon points="1.1,1.8 9,10.1 1.1,18.4" fill="none" stroke="#f1f1f1" stroke-width="2.2"/></svg>
<svg class="a" style="left:156px;top:666px" width="10" height="14" viewBox="0 0 10 14"><path d="M1.2 5.5 A3.8 3.8 0 0 1 8.8 5.5" fill="none" stroke="#3ab0ea" stroke-width="2.1"/><rect x="0" y="6.2" width="10" height="7.8" fill="#3ab0ea"/><rect x="4" y="8.2" width="2" height="3.6" fill="#1e1e1e"/></svg>
<svg class="a" style="left:174px;top:663px" width="24" height="17" viewBox="0 0 24 17"><path d="M9.5 4 A5.5 6 0 1 0 9.5 13" fill="none" stroke="#89d185" stroke-width="3.6"/><path d="M15 0 V11 M19.5 0 V11 M12 3.5 H22.5 M12 7.5 H22.5" stroke="#97e497" stroke-width="2.2"/></svg>
<div class="t" style="left:211px;top:660.28px;font-size:24px;color:#f1f1f1;transform-origin:0 0;transform:scaleX(0.9528);">LoggedInUser.cs</div>
<svg class="a" style="left:131px;top:697px" width="11" height="21" viewBox="0 0 11 21"><polygon points="1.1,1.8 9,10.1 1.1,18.4" fill="none" stroke="#f1f1f1" stroke-width="2.2"/></svg>
<svg class="a" style="left:156px;top:702px" width="10" height="14" viewBox="0 0 10 14"><path d="M1.2 5.5 A3.8 3.8 0 0 1 8.8 5.5" fill="none" stroke="#3ab0ea" stroke-width="2.1"/><rect x="0" y="6.2" width="10" height="7.8" fill="#3ab0ea"/><rect x="4" y="8.2" width="2" height="3.6" fill="#1e1e1e"/></svg>
<svg class="a" style="left:174px;top:699px" width="24" height="17" viewBox="0 0 24 17"><path d="M9.5 4 A5.5 6 0 1 0 9.5 13" fill="none" stroke="#89d185" stroke-width="3.6"/><path d="M15 0 V11 M19.5 0 V11 M12 3.5 H22.5 M12 7.5 H22.5" stroke="#97e497" stroke-width="2.2"/></svg>
<div class="t" style="left:211px;top:696.28px;font-size:24px;color:#f1f1f1;transform-origin:0 0;transform:scaleX(0.9424);">OrderData.cs</div>
<svg class="a" style="left:131px;top:733px" width="11" height="21" viewBox="0 0 11 21"><polygon points="1.1,1.8 9,10.1 1.1,18.4" fill="none" stroke="#f1f1f1" stroke-width="2.2"/></svg>
<svg class="a" style="left:156px;top:738px" width="10" height="14" viewBox="0 0 10 14"><path d="M1.2 5.5 A3.8 3.8 0 0 1 8.8 5.5" fill="none" stroke="#3ab0ea" stroke-width="2.1"/><rect x="0" y="6.2" width="10" height="7.8" fill="#3ab0ea"/><rect x="4" y="8.2" width="2" height="3.6" fill="#1e1e1e"/></svg>
<svg class="a" style="left:174px;top:735px" width="24" height="17" viewBox="0 0 24 17"><path d="M9.5 4 A5.5 6 0 1 0 9.5 13" fill="none" stroke="#89d185" stroke-width="3.6"/><path d="M15 0 V11 M19.5 0 V11 M12 3.5 H22.5 M12 7.5 H22.5" stroke="#97e497" stroke-width="2.2"/></svg>
<div class="t" style="left:211px;top:732.28px;font-size:24px;color:#f1f1f1;transform-origin:0 0;transform:scaleX(0.9641);">OrderItemData.cs</div>
<svg class="a" style="left:131px;top:769px" width="11" height="21" viewBox="0 0 11 21"><polygon points="1.1,1.8 9,10.1 1.1,18.4" fill="none" stroke="#f1f1f1" stroke-width="2.2"/></svg>
<svg class="a" style="left:156px;top:774px" width="10" height="14" viewBox="0 0 10 14"><path d="M1.2 5.5 A3.8 3.8 0 0 1 8.8 5.5" fill="none" stroke="#3ab0ea" stroke-width="2.1"/><rect x="0" y="6.2" width="10" height="7.8" fill="#3ab0ea"/><rect x="4" y="8.2" width="2" height="3.6" fill="#1e1e1e"/></svg>
<svg class="a" style="left:174px;top:771px" width="24" height="17" viewBox="0 0 24 17"><path d="M9.5 4 A5.5 6 0 1 0 9.5 13" fill="none" stroke="#89d185" stroke-width="3.6"/><path d="M15 0 V11 M19.5 0 V11 M12 3.5 H22.5 M12 7.5 H22.5" stroke="#97e497" stroke-width="2.2"/></svg>
<div class="t" style="left:211px;top:768.28px;font-size:24px;color:#f1f1f1;transform-origin:0 0;transform:scaleX(0.9401);">StockInfo.cs</div>
<svg class="a" style="left:131px;top:805px" width="11" height="21" viewBox="0 0 11 21"><polygon points="1.1,1.8 9,10.1 1.1,18.4" fill="none" stroke="#f1f1f1" stroke-width="2.2"/></svg>
<svg class="a" style="left:156px;top:810px" width="10" height="14" viewBox="0 0 10 14"><path d="M1.2 5.5 A3.8 3.8 0 0 1 8.8 5.5" fill="none" stroke="#3ab0ea" stroke-width="2.1"/><rect x="0" y="6.2" width="10" height="7.8" fill="#3ab0ea"/><rect x="4" y="8.2" width="2" height="3.6" fill="#1e1e1e"/></svg>
<svg class="a" style="left:174px;top:807px" width="24" height="17" viewBox="0 0 24 17"><path d="M9.5 4 A5.5 6 0 1 0 9.5 13" fill="none" stroke="#89d185" stroke-width="3.6"/><path d="M15 0 V11 M19.5 0 V11 M12 3.5 H22.5 M12 7.5 H22.5" stroke="#97e497" stroke-width="2.2"/></svg>
<div class="t" style="left:211px;top:804.28px;font-size:24px;color:#f1f1f1;transform-origin:0 0;transform:scaleX(0.9315);">TransactionLogs.cs</div>
<svg class="a" style="left:131px;top:841px" width="11" height="21" viewBox="0 0 11 21"><polygon points="1.1,1.8 9,10.1 1.1,18.4" fill="none" stroke="#f1f1f1" stroke-width="2.2"/></svg>
<svg class="a" style="left:156px;top:846px" width="10" height="14" viewBox="0 0 10 14"><path d="M1.2 5.5 A3.8 3.8 0 0 1 8.8 5.5" fill="none" stroke="#3ab0ea" stroke-width="2.1"/><rect x="0" y="6.2" width="10" height="7.8" fill="#3ab0ea"/><rect x="4" y="8.2" width="2" height="3.6" fill="#1e1e1e"/></svg>
<svg class="a" style="left:174px;top:843px" width="24" height="17" viewBox="0 0 24 17"><path d="M9.5 4 A5.5 6 0 1 0 9.5 13" fill="none" stroke="#89d185" stroke-width="3.6"/><path d="M15 0 V11 M19.5 0 V11 M12 3.5 H22.5 M12 7.5 H22.5" stroke="#97e497" stroke-width="2.2"/></svg>
<div class="t" style="left:211px;top:840.28px;font-size:24px;color:#f1f1f1;transform-origin:0 0;transform:scaleX(0.8699);">Users.cs</div>
<svg class="a" style="left:95px;top:877px" width="11" height="21" viewBox="0 0 11 21"><polygon points="1.1,1.8 9,10.1 1.1,18.4" fill="none" stroke="#f1f1f1" stroke-width="2.2"/></svg>
<svg class="a" style="left:120px;top:882px" width="10" height="14" viewBox="0 0 10 14"><path d="M1.2 5.5 A3.8 3.8 0 0 1 8.8 5.5" fill="none" stroke="#3ab0ea" stroke-width="2.1"/><rect x="0" y="6.2" width="10" height="7.8" fill="#3ab0ea"/><rect x="4" y="8.2" width="2" height="3.6" fill="#1e1e1e"/></svg>
<svg class="a" style="left:137px;top:877px" width="27" height="22" viewBox="0 0 27 22"><polygon points="0,5 8,5 10,0 27,0 27,22 0,22" fill="#dcb67a"/><rect x="12" y="3" width="12" height="2" fill="#252526"/></svg>
<div class="t" style="left:175px;top:876.28px;font-size:24px;color:#f1f1f1;transform-origin:0 0;transform:scaleX(0.9248);">Types</div>
<svg class="a" style="left:94px;top:917px" width="13" height="13" viewBox="0 0 13 13"><polygon points="0,13 13,0 13,13" fill="#f1f1f1"/></svg>
<svg class="a" style="left:120px;top:918px" width="10" height="14" viewBox="0 0 10 14"><path d="M1.2 5.5 A3.8 3.8 0 0 1 8.8 5.5" fill="none" stroke="#3ab0ea" stroke-width="2.1"/><rect x="0" y="6.2" width="10" height="7.8" fill="#3ab0ea"/><rect x="4" y="8.2" width="2" height="3.6" fill="#1e1e1e"/></svg>
<svg class="a" style="left:134.5px;top:911.5px" width="28" height="22" viewBox="0 0 28 22"><path d="M3 10 V3 Q3 2 4 2 H9.5 L11.5 0.5 H26 Q27 0.5 27 1.5 V21" fill="none" stroke="#dcb67a" stroke-width="2.3"/><polygon points="0,12 19.5,12 26.5,22 3.5,22" fill="#dcb67a"/></svg>
<div class="t" style="left:175px;top:912.28px;font-size:24px;color:#f1f1f1;transform-origin:0 0;transform:scaleX(0.9783);">Validations</div>
<svg class="a" style="left:131px;top:949px" width="11" height="21" viewBox="0 0 11 21"><polygon points="1.1,1.8 9,10.1 1.1,18.4" fill="none" stroke="#f1f1f1" stroke-width="2.2"/></svg>
<svg class="a" style="left:156px;top:954px" width="10" height="14" viewBox="0 0 10 14"><path d="M1.2 5.5 A3.8 3.8 0 0 1 8.8 5.5" fill="none" stroke="#3ab0ea" stroke-width="2.1"/><rect x="0" y="6.2" width="10" height="7.8" fill="#3ab0ea"/><rect x="4" y="8.2" width="2" height="3.6" fill="#1e1e1e"/></svg>
<svg class="a" style="left:174px;top:951px" width="24" height="17" viewBox="0 0 24 17"><path d="M9.5 4 A5.5 6 0 1 0 9.5 13" fill="none" stroke="#89d185" stroke-width="3.6"/><path d="M15 0 V11 M19.5 0 V11 M12 3.5 H22.5 M12 7.5 H22.5" stroke="#97e497" stroke-width="2.2"/></svg>
<div class="t" style="left:211px;top:948.28px;font-size:24px;color:#f1f1f1;transform-origin:0 0;transform:scaleX(0.9508);">ValidationRules.cs</div>
<svg class="a" style="left:58px;top:985px" width="11" height="21" viewBox="0 0 11 21"><polygon points="1.1,1.8 9,10.1 1.1,18.4" fill="none" stroke="#f1f1f1" stroke-width="2.2"/></svg>
<svg class="a" style="left:83px;top:990px" width="10" height="14" viewBox="0 0 10 14"><path d="M1.2 5.5 A3.8 3.8 0 0 1 8.8 5.5" fill="none" stroke="#3ab0ea" stroke-width="2.1"/><rect x="0" y="6.2" width="10" height="7.8" fill="#3ab0ea"/><rect x="4" y="8.2" width="2" height="3.6" fill="#1e1e1e"/></svg>
<svg class="a" style="left:98px;top:981px" width="28" height="30" viewBox="0 0 28 30"><rect x="0" y="3" width="28" height="6" fill="#c8c8c8"/><path d="M1 9 V13 M27 9 V26 H18" fill="none" stroke="#c8c8c8" stroke-width="2"/><circle cx="9" cy="20" r="10.2" fill="#252526"/><circle cx="9" cy="20" r="8" fill="none" stroke="#3ab0ea" stroke-width="1.8"/><ellipse cx="9" cy="20" rx="3.6" ry="8" fill="none" stroke="#3ab0ea" stroke-width="1.5"/><path d="M1.5 17 H16.5 M1.5 23 H16.5 M9 12 V15" stroke="#3ab0ea" stroke-width="1.5"/></svg>
<div class="t" style="left:138px;top:984.28px;font-size:24px;color:#f1f1f1;transform-origin:0 0;transform:scaleX(0.9098);">GenesisSvc</div>
<svg class="a" style="left:21px;top:1025px" width="13" height="13" viewBox="0 0 13 13"><polygon points="0,13 13,0 13,13" fill="#f1f1f1"/></svg>
<svg class="a" style="left:61.5px;top:1019.5px" width="28" height="22" viewBox="0 0 28 22"><path d="M3 10 V3 Q3 2 4 2 H9.5 L11.5 0.5 H26 Q27 0.5 27 1.5 V21" fill="none" stroke="#dcb67a" stroke-width="2.3"/><polygon points="0,12 19.5,12 26.5,22 3.5,22" fill="#dcb67a"/></svg>
<div class="t" style="left:102px;top:1020.28px;font-size:24px;color:#f1f1f1;transform-origin:0 0;transform:scaleX(0.9463);">SampleServices</div>
<svg class="a" style="left:58px;top:1057px" width="11" height="21" viewBox="0 0 11 21"><polygon points="1.1,1.8 9,10.1 1.1,18.4" fill="none" stroke="#f1f1f1" stroke-width="2.2"/></svg>
<svg class="a" style="left:100px;top:1057px" width="27" height="22" viewBox="0 0 27 22"><polygon points="0,5 8,5 10,0 27,0 27,22 0,22" fill="#dcb67a"/><rect x="12" y="3" width="12" height="2" fill="#252526"/></svg>
<div class="t" style="left:138px;top:1056.28px;font-size:24px;color:#f1f1f1;transform-origin:0 0;transform:scaleX(0.9982);">InventoryMicroService</div>
<svg class="a" style="left:57px;top:1097px" width="13" height="13" viewBox="0 0 13 13"><polygon points="0,13 13,0 13,13" fill="#f1f1f1"/></svg>
<svg class="a" style="left:97.5px;top:1091.5px" width="28" height="22" viewBox="0 0 28 22"><path d="M3 10 V3 Q3 2 4 2 H9.5 L11.5 0.5 H26 Q27 0.5 27 1.5 V21" fill="none" stroke="#dcb67a" stroke-width="2.3"/><polygon points="0,12 19.5,12 26.5,22 3.5,22" fill="#dcb67a"/></svg>
<div class="t" style="left:138px;top:1092.28px;font-size:24px;color:#f1f1f1;transform-origin:0 0;transform:scaleX(0.9847);">OrderMicroService</div>
<svg class="a" style="left:95px;top:1129px" width="11" height="21" viewBox="0 0 11 21"><polygon points="1.1,1.8 9,10.1 1.1,18.4" fill="none" stroke="#f1f1f1" stroke-width="2.2"/></svg>
<svg class="a" style="left:120px;top:1134px" width="10" height="14" viewBox="0 0 10 14"><path d="M1.2 5.5 A3.8 3.8 0 0 1 8.8 5.5" fill="none" stroke="#3ab0ea" stroke-width="2.1"/><rect x="0" y="6.2" width="10" height="7.8" fill="#3ab0ea"/><rect x="4" y="8.2" width="2" height="3.6" fill="#1e1e1e"/></svg>
<svg class="a" style="left:135px;top:1125px" width="28" height="30" viewBox="0 0 28 30"><rect x="0" y="3" width="28" height="6" fill="#c8c8c8"/><path d="M1 9 V13 M27 9 V26 H18" fill="none" stroke="#c8c8c8" stroke-width="2"/><circle cx="9" cy="20" r="10.2" fill="#252526"/><circle cx="9" cy="20" r="8" fill="none" stroke="#3ab0ea" stroke-width="1.8"/><ellipse cx="9" cy="20" rx="3.6" ry="8" fill="none" stroke="#3ab0ea" stroke-width="1.5"/><path d="M1.5 17 H16.5 M1.5 23 H16.5 M9 12 V15" stroke="#3ab0ea" stroke-width="1.5"/></svg>
<div class="t" style="left:175px;top:1128.28px;font-size:24px;color:#f1f1f1;transform-origin:0 0;transform:scaleX(0.9528);">Ordering.API</div>
<svg class="a" style="left:94px;top:1169px" width="13" height="13" viewBox="0 0 13 13"><polygon points="0,13 13,0 13,13" fill="#f1f1f1"/></svg>
<svg class="a" style="left:120px;top:1170px" width="10" height="14" viewBox="0 0 10 14"><path d="M1.2 5.5 A3.8 3.8 0 0 1 8.8 5.5" fill="none" stroke="#3ab0ea" stroke-width="2.1"/><rect x="0" y="6.2" width="10" height="7.8" fill="#3ab0ea"/><rect x="4" y="8.2" width="2" height="3.6" fill="#1e1e1e"/></svg>
<svg class="a" style="left:135px;top:1164px" width="28" height="24" viewBox="0 0 28 24"><rect x="1" y="1" width="26" height="22" fill="none" stroke="#89d185" stroke-width="2.2"/><path d="M12.3 8.4 A4.3 4.9 0 1 0 12.3 15.6" fill="none" stroke="#c8c8c8" stroke-width="2.4"/><path d="M17 5.5 V16.5 M21.5 5.5 V16.5 M14 8.5 H24.5 M14 13 H24.5" stroke="#c8c8c8" stroke-width="2"/></svg>
<div class="t" style="left:175px;top:1164.28px;font-size:24px;color:#f1f1f1;transform-origin:0 0;transform:scaleX(0.9740);">Ordering.DataLib</div>
<div class="a" style="left:0px;top:1193px;width:846px;height:37px;background:#3f3f46;"></div>
<svg class="a" style="left:130px;top:1205px" width="13" height="13" viewBox="0 0 13 13"><polygon points="0,13 13,0 13,13" fill="#f1f1f1"/></svg>
<svg class="a" style="left:168px;top:1200px" width="31" height="27" viewBox="0 0 31 27"><rect x="22" y="0" width="8" height="10" fill="#c8c8c8"/><rect x="8" y="4" width="6" height="6" fill="#c8c8c8"/><rect x="15" y="6" width="5" height="2" fill="#c8c8c8"/><rect x="2" y="14" width="6" height="6" fill="#c8c8c8"/><rect x="9" y="16" width="5" height="2" fill="#c8c8c8"/><rect x="16" y="12" width="4" height="8" fill="#c8c8c8"/><polygon points="22,10 31,26 13,26" fill="#ffcc00" stroke="#3f3f46" stroke-width="1.5"/><rect x="21" y="15" width="2" height="5" fill="#3f3f46"/><rect x="21" y="21.5" width="2" height="2" fill="#3f3f46"/></svg>
<div class="t" style="left:211px;top:1200.28px;font-size:24px;color:#f1f1f1;transform-origin:0 0;transform:scaleX(0.9824);">Dependencies</div>
<svg class="a" style="left:167px;top:1237px" width="11" height="21" viewBox="0 0 11 21"><polygon points="1.1,1.8 9,10.1 1.1,18.4" fill="none" stroke="#f1f1f1" stroke-width="2.2"/></svg>
<svg class="a" style="left:208px;top:1243px" width="25" height="20" viewBox="0 0 25 20"><rect x="0" y="0" width="11" height="3" fill="#c8c8c8"/><rect x="12" y="0" width="13" height="3" fill="#c8c8c8"/><rect x="0" y="5" width="25" height="2" fill="#c8c8c8"/><rect x="4" y="9" width="7" height="3" fill="#c8c8c8"/><rect x="12" y="9" width="13" height="3" fill="#c8c8c8"/></svg>
<div class="t" style="left:247px;top:1236.28px;font-size:24px;color:#f1f1f1;transform-origin:0 0;transform:scaleX(0.9700);">Analyzers</div>
</div>
<div class="a" style="left:1934px;top:1568px;width:2px;height:42px;background:#3f3f46;"></div>
<div class="a" style="left:1936px;top:1568px;width:202px;height:40px;background:#252526;"></div>
<div class="a" style="left:2138px;top:1568px;width:680px;height:2px;background:#3f3f46;"></div>
<div class="a" style="left:2138px;top:1568px;width:2px;height:42px;background:#3f3f46;"></div>
<div class="a" style="left:1934px;top:1608px;width:206px;height:2px;background:#3f3f46;"></div>
<div class="t" style="left:1947px;top:1576.28px;font-size:24px;color:#0097fb;transform-origin:0 0;transform:scaleX(0.9936);">Solution Explorer</div>
<div class="t" style="left:2152px;top:1578.28px;font-size:24px;color:#f1f1f1;transform-origin:0 0;transform:scaleX(0.9694);">Team Explorer</div>
<div class="a" style="left:2868px;top:172px;width:11px;height:135px;background:#3e3e42;"></div>
<div class="a" style="left:2868px;top:331px;width:11px;height:107px;background:#3e3e42;"></div>
<div class="t" style="left:2844px;top:173px;font-size:24px;color:#e0e0e0;transform-origin:0 0;transform:rotate(90deg) translate(0,-50%) scaleX(1.0176);line-height:28px">Notifications</div>
<div class="t" style="left:2842px;top:332px;font-size:24px;color:#e0e0e0;transform-origin:0 0;transform:rotate(90deg) translate(0,-50%) scaleX(0.9644);line-height:28px">Properties</div>
<div class="t" style="left:62.7px;top:1626.28px;font-size:24px;color:#f1f1f1;transform-origin:0 0;transform:scaleX(0.9376);">Error List</div>
<div class="a" style="left:62.7px;top:1660px;width:91.3px;height:12px;background:#3f3f46;"></div>
<div class="t" style="left:177.5px;top:1626.28px;font-size:24px;color:#f1f1f1;transform-origin:0 0;transform:scaleX(1.0137);">Command Window</div>
<div class="a" style="left:177.5px;top:1660px;width:205.5px;height:12px;background:#3f3f46;"></div>
<div class="t" style="left:406.5px;top:1626.28px;font-size:24px;color:#f1f1f1;transform-origin:0 0;transform:scaleX(0.9912);">'LoggedInUser' references</div>
<div class="a" style="left:406.5px;top:1660px;width:277.5px;height:12px;background:#3f3f46;"></div>
<div class="t" style="left:707.6px;top:1626.28px;font-size:24px;color:#f1f1f1;transform-origin:0 0;transform:scaleX(1.0604);">Output</div>
<div class="a" style="left:707.6px;top:1660px;width:76.39999999999998px;height:12px;background:#3f3f46;"></div>
<div class="a" style="left:0px;top:1672px;width:2879px;height:48px;background:#007acc;"></div>
<svg class="a" style="left:8px;top:1686px" width="33" height="23" viewBox="0 0 33 23"><polygon points="7,1.5 31,1.5 26,21.5 2,21.5" fill="none" stroke="#ffffff" stroke-width="2.5"/></svg>
<div class="t" style="left:56px;top:1684.28px;font-size:24px;color:#ffffff;transform-origin:0 0;transform:scaleX(0.9170);">Ready</div>
<div class="t" style="left:1360.4px;top:1684.28px;font-size:24px;color:#ffffff;transform-origin:0 0;transform:scaleX(0.9493);">Ln 25</div>
<div class="t" style="left:1544.7px;top:1684.28px;font-size:24px;color:#ffffff;transform-origin:0 0;transform:scaleX(0.9640);">Col 1</div>
<div class="t" style="left:1727.8px;top:1684.28px;font-size:24px;color:#ffffff;transform-origin:0 0;transform:scaleX(0.9667);">Ch 1</div>
<div class="t" style="left:1999px;top:1684.28px;font-size:24px;color:#ffffff;transform-origin:0 0;transform:scaleX(0.9596);">INS</div>
<svg class="a" style="left:2157px;top:1685px" width="19" height="23" viewBox="0 0 19 23"><path d="M9.5 5 V23 M2 11.5 L9.5 3.5 L17 11.5" fill="none" stroke="#d8d8d8" stroke-width="4"/></svg>
<div class="t" style="left:2193px;top:1684.28px;font-size:24px;color:#ffffff;">0</div>
<svg class="a" style="left:2256px;top:1684px" width="23" height="24" viewBox="0 0 23 24"><polygon points="0,24 1,18 16,3 21,8 6,23" fill="#d8d8d8"/><polygon points="17.5,1.5 20,-1 25,4 22.5,6.5" fill="#d8d8d8"/></svg>
<div class="t" style="left:2294px;top:1684.28px;font-size:24px;color:#ffffff;">0</div>
<svg class="a" style="left:2353px;top:1682px" width="30" height="30" viewBox="0 0 30 30"><polygon points="15,0 30,15 15,30 0,15" fill="#d8d8d8"/><path d="M11 6 L15 10 V23 M15 10 L21 16" fill="none" stroke="#007acc" stroke-width="2"/><circle cx="15" cy="10" r="2.5" fill="#007acc"/><circle cx="15" cy="23" r="2.5" fill="#007acc"/><circle cx="21" cy="16" r="2.5" fill="#007acc"/></svg>
<div class="t" style="left:2396.6px;top:1684.28px;font-size:24px;color:#ffffff;transform-origin:0 0;transform:scaleX(0.9446);">Service Base (.Net Core)</div>
<svg class="a" style="left:2695px;top:1684px" width="30" height="25" viewBox="0 0 30 25"><path d="M5 4 L15 14 L25 4 M15 14 V25" fill="none" stroke="#d8d8d8" stroke-width="5"/><polygon points="0,0 9,0 0,9" fill="#d8d8d8"/><polygon points="30,0 21,0 30,9" fill="#d8d8d8"/></svg>
<div class="t" style="left:2738px;top:1684.28px;font-size:24px;color:#ffffff;transform-origin:0 0;transform:scaleX(0.9815);">master</div>
<svg class="a" style="left:2823px;top:1689px" width="15" height="9" viewBox="0 0 15 9"><polygon points="0,9 7.5,0 15,9" fill="#ffffff"/></svg>
<div class="t" style="left:2304px;top:1551.80px;font-size:40px;color:rgba(200,200,200,0.62);transform-origin:0 0;transform:scaleX(0.9947);">Activate Windows</div>
<div class="t" style="left:2304px;top:1605.66px;font-size:28px;color:rgba(200,200,200,0.62);transform-origin:0 0;transform:scaleX(1.0247);">Go to Settings to activate Windows.</div>
</body></html>
